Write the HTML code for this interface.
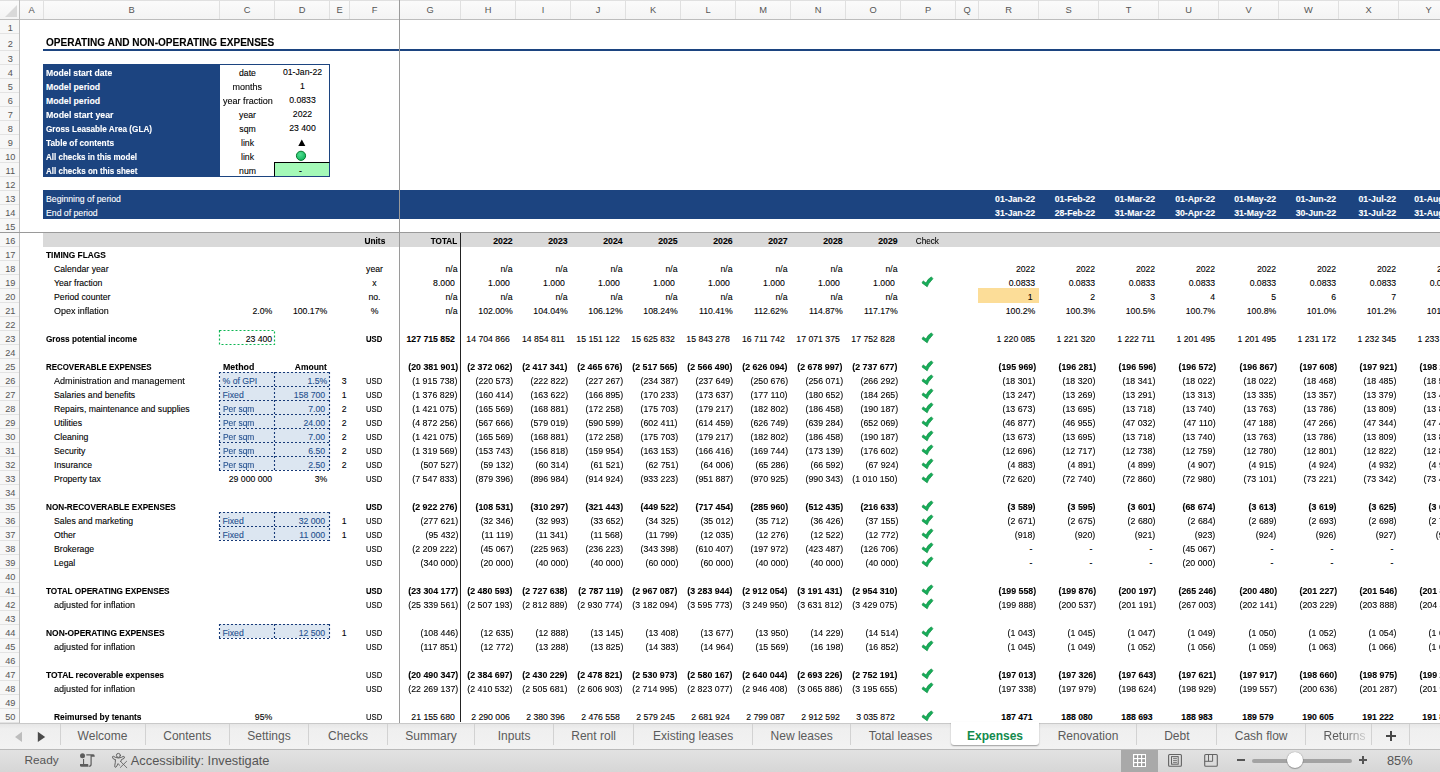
<!DOCTYPE html>
<html><head><meta charset="utf-8"><style>
html,body{margin:0;padding:0;width:1440px;height:772px;overflow:hidden;background:#fff;}
body{position:relative;font-family:"Liberation Sans",sans-serif;}
.c{position:absolute;height:14px;line-height:14px;font-size:8.7px;white-space:nowrap;color:#000;-webkit-text-stroke:0.1px currentColor;}
.h{position:absolute;top:1px;height:18px;line-height:18.6px;font-size:9.3px;color:#555;text-align:center;}
.rn{position:absolute;left:0;width:19px;padding-left:1.5px;box-sizing:border-box;font-size:9.2px;color:#555;text-align:center;}
.tab{position:absolute;top:723px;height:25px;line-height:26px;font-size:12px;color:#5b5b5b;text-align:center;white-space:nowrap;}
.st{position:absolute;top:749px;height:23px;line-height:23px;font-size:12.5px;color:#555;white-space:nowrap;}
</style></head><body>
<div style="position:absolute;left:43px;top:49px;width:1397px;height:2px;background:#1c4480;"></div>
<div style="position:absolute;left:43px;top:64px;width:176px;height:113px;background:#1c4480;"></div>
<div style="position:absolute;left:219px;top:64px;width:111px;height:113px;border:1px solid #1c4480;box-sizing:border-box;"></div>
<div style="position:absolute;left:274px;top:162px;width:56px;height:15px;background:#a4f9b7;border-top:1px solid #000;border-left:1px solid #000;border-right:1px solid #1c4480;border-bottom:1px solid #1c4480;box-sizing:border-box;"></div>
<div style="position:absolute;left:43px;top:190px;width:1397px;height:29px;background:#1c4480;"></div>
<div style="position:absolute;left:43px;top:233px;width:1397px;height:14px;background:#d9d9d9;"></div>
<div style="position:absolute;left:460px;top:233px;width:1px;height:489px;background:#222;"></div>
<div style="position:absolute;left:978px;top:288px;width:61px;height:15px;background:#fcdd98;"></div>
<div style="position:absolute;left:220px;top:372px;width:55px;height:14px;background:#dce6f1;"></div>
<div style="position:absolute;left:275px;top:372px;width:55px;height:14px;background:#dce6f1;"></div>
<div style="position:absolute;left:220px;top:386px;width:55px;height:14px;background:#dce6f1;"></div>
<div style="position:absolute;left:275px;top:386px;width:55px;height:14px;background:#dce6f1;"></div>
<div style="position:absolute;left:220px;top:400px;width:55px;height:14px;background:#dce6f1;"></div>
<div style="position:absolute;left:275px;top:400px;width:55px;height:14px;background:#dce6f1;"></div>
<div style="position:absolute;left:220px;top:414px;width:55px;height:14px;background:#dce6f1;"></div>
<div style="position:absolute;left:275px;top:414px;width:55px;height:14px;background:#dce6f1;"></div>
<div style="position:absolute;left:220px;top:428px;width:55px;height:14px;background:#dce6f1;"></div>
<div style="position:absolute;left:275px;top:428px;width:55px;height:14px;background:#dce6f1;"></div>
<div style="position:absolute;left:220px;top:442px;width:55px;height:14px;background:#dce6f1;"></div>
<div style="position:absolute;left:275px;top:442px;width:55px;height:14px;background:#dce6f1;"></div>
<div style="position:absolute;left:220px;top:456px;width:55px;height:14px;background:#dce6f1;"></div>
<div style="position:absolute;left:275px;top:456px;width:55px;height:14px;background:#dce6f1;"></div>
<div style="position:absolute;left:220px;top:512px;width:55px;height:14px;background:#dce6f1;"></div>
<div style="position:absolute;left:275px;top:512px;width:55px;height:14px;background:#dce6f1;"></div>
<div style="position:absolute;left:220px;top:526px;width:55px;height:14px;background:#dce6f1;"></div>
<div style="position:absolute;left:275px;top:526px;width:55px;height:14px;background:#dce6f1;"></div>
<div style="position:absolute;left:220px;top:624px;width:55px;height:14px;background:#dce6f1;"></div>
<div style="position:absolute;left:275px;top:624px;width:55px;height:14px;background:#dce6f1;"></div>
<svg style="position:absolute;left:0;top:0" width="1440" height="772"><rect x="219.5" y="330.5" width="55" height="14" fill="none" stroke="#0cb652" stroke-width="1.2" stroke-dasharray="2,2"/></svg>
<div class="c" style="left:43px;top:35.6px;width:177px;text-align:left;padding-left:3px;box-sizing:border-box;font-weight:bold;font-size:10px;"><span style="display:inline-block;transform:scaleX(1.008);transform-origin:left;">OPERATING AND NON-OPERATING EXPENSES</span></div>
<div class="c" style="left:43px;top:65.6px;width:177px;text-align:left;padding-left:3px;box-sizing:border-box;font-weight:bold;color:#fff;"><span style="display:inline-block;transform:scaleX(0.994);transform-origin:left;">Model start date</span></div>
<div class="c" style="left:220px;top:65.6px;width:55px;text-align:center;">date</div>
<div class="c" style="left:275px;top:64.6px;width:55px;text-align:center;">01-Jan-22</div>
<div class="c" style="left:43px;top:79.6px;width:177px;text-align:left;padding-left:3px;box-sizing:border-box;font-weight:bold;color:#fff;">Model period</div>
<div class="c" style="left:220px;top:79.6px;width:55px;text-align:center;"><span style="display:inline-block;transform:scaleX(1.035);transform-origin:center;">months</span></div>
<div class="c" style="left:275px;top:78.6px;width:55px;text-align:center;">1</div>
<div class="c" style="left:43px;top:93.6px;width:177px;text-align:left;padding-left:3px;box-sizing:border-box;font-weight:bold;color:#fff;">Model period</div>
<div class="c" style="left:220px;top:93.6px;width:55px;text-align:center;"><span style="display:inline-block;transform:scaleX(1.042);transform-origin:center;">year fraction</span></div>
<div class="c" style="left:275px;top:92.6px;width:55px;text-align:center;">0.0833</div>
<div class="c" style="left:43px;top:107.6px;width:177px;text-align:left;padding-left:3px;box-sizing:border-box;font-weight:bold;color:#fff;"><span style="display:inline-block;transform:scaleX(1.013);transform-origin:left;">Model start year</span></div>
<div class="c" style="left:220px;top:107.6px;width:55px;text-align:center;">year</div>
<div class="c" style="left:275px;top:106.6px;width:55px;text-align:center;">2022</div>
<div class="c" style="left:43px;top:121.6px;width:177px;text-align:left;padding-left:3px;box-sizing:border-box;font-weight:bold;color:#fff;"><span style="display:inline-block;transform:scaleX(0.941);transform-origin:left;">Gross Leasable Area (GLA)</span></div>
<div class="c" style="left:220px;top:121.6px;width:55px;text-align:center;">sqm</div>
<div class="c" style="left:275px;top:120.6px;width:55px;text-align:center;">23 400</div>
<div class="c" style="left:43px;top:135.6px;width:177px;text-align:left;padding-left:3px;box-sizing:border-box;font-weight:bold;color:#fff;"><span style="display:inline-block;transform:scaleX(0.955);transform-origin:left;">Table of contents</span></div>
<div class="c" style="left:220px;top:135.6px;width:55px;text-align:center;">link</div>
<div class="c" style="left:43px;top:149.6px;width:177px;text-align:left;padding-left:3px;box-sizing:border-box;font-weight:bold;color:#fff;"><span style="display:inline-block;transform:scaleX(0.92);transform-origin:left;">All checks in this model</span></div>
<div class="c" style="left:220px;top:149.6px;width:55px;text-align:center;">link</div>
<div class="c" style="left:43px;top:163.6px;width:177px;text-align:left;padding-left:3px;box-sizing:border-box;font-weight:bold;color:#fff;"><span style="display:inline-block;transform:scaleX(0.924);transform-origin:left;">All checks on this sheet</span></div>
<div class="c" style="left:220px;top:163.6px;width:55px;text-align:center;">num</div>
<div class="c" style="left:275px;top:164.1px;width:55px;text-align:center;margin-left:-2px;">-</div>
<svg style="position:absolute;left:0;top:0" width="1440" height="772"><polygon points="301.8,139.4 298.3,146 305.3,146" fill="#000"/><defs><radialGradient id="gc" cx="0.4" cy="0.35" r="0.7"><stop offset="0" stop-color="#52de90"/><stop offset="1" stop-color="#0db45c"/></radialGradient></defs><circle cx="301" cy="155.8" r="4.6" fill="url(#gc)" stroke="#077a2e" stroke-width="1"/></svg>
<div class="c" style="left:43px;top:191.6px;width:177px;text-align:left;padding-left:3px;box-sizing:border-box;color:#fff;">Beginning of period</div>
<div class="c" style="left:43px;top:205.6px;width:177px;text-align:left;padding-left:3px;box-sizing:border-box;color:#fff;">End of period</div>
<div class="c" style="left:978px;top:191.6px;width:60px;text-align:right;padding-right:2.8px;box-sizing:border-box;font-weight:bold;color:#fff;">01-Jan-22</div>
<div class="c" style="left:978px;top:205.6px;width:60px;text-align:right;padding-right:2.8px;box-sizing:border-box;font-weight:bold;color:#fff;">31-Jan-22</div>
<div class="c" style="left:1038px;top:191.6px;width:60px;text-align:right;padding-right:2.8px;box-sizing:border-box;font-weight:bold;color:#fff;">01-Feb-22</div>
<div class="c" style="left:1038px;top:205.6px;width:60px;text-align:right;padding-right:2.8px;box-sizing:border-box;font-weight:bold;color:#fff;">28-Feb-22</div>
<div class="c" style="left:1098px;top:191.6px;width:60px;text-align:right;padding-right:2.8px;box-sizing:border-box;font-weight:bold;color:#fff;">01-Mar-22</div>
<div class="c" style="left:1098px;top:205.6px;width:60px;text-align:right;padding-right:2.8px;box-sizing:border-box;font-weight:bold;color:#fff;">31-Mar-22</div>
<div class="c" style="left:1158px;top:191.6px;width:60px;text-align:right;padding-right:2.8px;box-sizing:border-box;font-weight:bold;color:#fff;">01-Apr-22</div>
<div class="c" style="left:1158px;top:205.6px;width:60px;text-align:right;padding-right:2.8px;box-sizing:border-box;font-weight:bold;color:#fff;">30-Apr-22</div>
<div class="c" style="left:1218px;top:191.6px;width:61px;text-align:right;padding-right:2.8px;box-sizing:border-box;font-weight:bold;color:#fff;">01-May-22</div>
<div class="c" style="left:1218px;top:205.6px;width:61px;text-align:right;padding-right:2.8px;box-sizing:border-box;font-weight:bold;color:#fff;">31-May-22</div>
<div class="c" style="left:1279px;top:191.6px;width:60px;text-align:right;padding-right:2.8px;box-sizing:border-box;font-weight:bold;color:#fff;">01-Jun-22</div>
<div class="c" style="left:1279px;top:205.6px;width:60px;text-align:right;padding-right:2.8px;box-sizing:border-box;font-weight:bold;color:#fff;">30-Jun-22</div>
<div class="c" style="left:1339px;top:191.6px;width:60px;text-align:right;padding-right:2.8px;box-sizing:border-box;font-weight:bold;color:#fff;">01-Jul-22</div>
<div class="c" style="left:1339px;top:205.6px;width:60px;text-align:right;padding-right:2.8px;box-sizing:border-box;font-weight:bold;color:#fff;">31-Jul-22</div>
<div class="c" style="left:1399px;top:191.6px;width:60px;text-align:right;padding-right:2.8px;box-sizing:border-box;font-weight:bold;color:#fff;">01-Aug-22</div>
<div class="c" style="left:1399px;top:205.6px;width:60px;text-align:right;padding-right:2.8px;box-sizing:border-box;font-weight:bold;color:#fff;">31-Aug-22</div>
<div class="c" style="left:349px;top:233.6px;width:50px;text-align:center;padding-left:1px;box-sizing:border-box;font-weight:bold;"><span style="display:inline-block;transform:scaleX(0.958);transform-origin:center;">Units</span></div>
<div class="c" style="left:399px;top:233.6px;width:61px;text-align:right;padding-right:2.4px;box-sizing:border-box;font-weight:bold;"><span style="display:inline-block;transform:scaleX(0.938);transform-origin:right;">TOTAL</span></div>
<div class="c" style="left:460px;top:233.6px;width:55px;text-align:right;padding-right:2.4px;box-sizing:border-box;font-weight:bold;">2022</div>
<div class="c" style="left:515px;top:233.6px;width:55px;text-align:right;padding-right:2.4px;box-sizing:border-box;font-weight:bold;">2023</div>
<div class="c" style="left:570px;top:233.6px;width:55px;text-align:right;padding-right:2.4px;box-sizing:border-box;font-weight:bold;">2024</div>
<div class="c" style="left:625px;top:233.6px;width:55px;text-align:right;padding-right:2.4px;box-sizing:border-box;font-weight:bold;">2025</div>
<div class="c" style="left:680px;top:233.6px;width:55px;text-align:right;padding-right:2.4px;box-sizing:border-box;font-weight:bold;">2026</div>
<div class="c" style="left:735px;top:233.6px;width:55px;text-align:right;padding-right:2.4px;box-sizing:border-box;font-weight:bold;">2027</div>
<div class="c" style="left:790px;top:233.6px;width:55px;text-align:right;padding-right:2.4px;box-sizing:border-box;font-weight:bold;">2028</div>
<div class="c" style="left:845px;top:233.6px;width:55px;text-align:right;padding-right:2.4px;box-sizing:border-box;font-weight:bold;">2029</div>
<div class="c" style="left:900px;top:233.6px;width:55px;text-align:center;"><span style="display:inline-block;transform:scaleX(0.938);transform-origin:center;">Check</span></div>
<div class="c" style="left:43px;top:247.6px;width:177px;text-align:left;padding-left:3px;box-sizing:border-box;font-weight:bold;"><span style="display:inline-block;transform:scaleX(0.962);transform-origin:left;">TIMING FLAGS</span></div>
<div class="c" style="left:43px;top:261.6px;width:177px;text-align:left;padding-left:11px;box-sizing:border-box;">Calendar year</div>
<div class="c" style="left:349px;top:261.6px;width:50px;text-align:center;padding-left:1px;box-sizing:border-box;">year</div>
<div class="c" style="left:43px;top:275.6px;width:177px;text-align:left;padding-left:11px;box-sizing:border-box;">Year fraction</div>
<div class="c" style="left:349px;top:275.6px;width:50px;text-align:center;padding-left:1px;box-sizing:border-box;">x</div>
<div class="c" style="left:43px;top:289.6px;width:177px;text-align:left;padding-left:11px;box-sizing:border-box;">Period counter</div>
<div class="c" style="left:349px;top:289.6px;width:50px;text-align:center;padding-left:1px;box-sizing:border-box;">no.</div>
<div class="c" style="left:43px;top:303.6px;width:177px;text-align:left;padding-left:11px;box-sizing:border-box;"><span style="display:inline-block;transform:scaleX(1.03);transform-origin:left;">Opex inflation</span></div>
<div class="c" style="left:349px;top:303.6px;width:50px;text-align:center;padding-left:1px;box-sizing:border-box;">%</div>
<div class="c" style="left:220px;top:303.6px;width:55px;text-align:right;padding-right:2.8px;box-sizing:border-box;">2.0%</div>
<div class="c" style="left:275px;top:303.6px;width:55px;text-align:right;padding-right:2.8px;box-sizing:border-box;">100.17%</div>
<div class="c" style="left:399px;top:261.6px;width:61px;text-align:right;padding-right:2.4px;box-sizing:border-box;">n/a</div>
<div class="c" style="left:399px;top:275.6px;width:61px;text-align:right;padding-right:5.2px;box-sizing:border-box;">8.000</div>
<div class="c" style="left:399px;top:289.6px;width:61px;text-align:right;padding-right:2.4px;box-sizing:border-box;">n/a</div>
<div class="c" style="left:399px;top:303.6px;width:61px;text-align:right;padding-right:2.4px;box-sizing:border-box;">n/a</div>
<div class="c" style="left:460px;top:261.6px;width:55px;text-align:right;padding-right:2.4px;box-sizing:border-box;">n/a</div>
<div class="c" style="left:460px;top:275.6px;width:55px;text-align:right;padding-right:5.2px;box-sizing:border-box;">1.000</div>
<div class="c" style="left:460px;top:289.6px;width:55px;text-align:right;padding-right:2.4px;box-sizing:border-box;">n/a</div>
<div class="c" style="left:460px;top:303.6px;width:55px;text-align:right;padding-right:2.4px;box-sizing:border-box;">102.00%</div>
<div class="c" style="left:515px;top:261.6px;width:55px;text-align:right;padding-right:2.4px;box-sizing:border-box;">n/a</div>
<div class="c" style="left:515px;top:275.6px;width:55px;text-align:right;padding-right:5.2px;box-sizing:border-box;">1.000</div>
<div class="c" style="left:515px;top:289.6px;width:55px;text-align:right;padding-right:2.4px;box-sizing:border-box;">n/a</div>
<div class="c" style="left:515px;top:303.6px;width:55px;text-align:right;padding-right:2.4px;box-sizing:border-box;">104.04%</div>
<div class="c" style="left:570px;top:261.6px;width:55px;text-align:right;padding-right:2.4px;box-sizing:border-box;">n/a</div>
<div class="c" style="left:570px;top:275.6px;width:55px;text-align:right;padding-right:5.2px;box-sizing:border-box;">1.000</div>
<div class="c" style="left:570px;top:289.6px;width:55px;text-align:right;padding-right:2.4px;box-sizing:border-box;">n/a</div>
<div class="c" style="left:570px;top:303.6px;width:55px;text-align:right;padding-right:2.4px;box-sizing:border-box;">106.12%</div>
<div class="c" style="left:625px;top:261.6px;width:55px;text-align:right;padding-right:2.4px;box-sizing:border-box;">n/a</div>
<div class="c" style="left:625px;top:275.6px;width:55px;text-align:right;padding-right:5.2px;box-sizing:border-box;">1.000</div>
<div class="c" style="left:625px;top:289.6px;width:55px;text-align:right;padding-right:2.4px;box-sizing:border-box;">n/a</div>
<div class="c" style="left:625px;top:303.6px;width:55px;text-align:right;padding-right:2.4px;box-sizing:border-box;">108.24%</div>
<div class="c" style="left:680px;top:261.6px;width:55px;text-align:right;padding-right:2.4px;box-sizing:border-box;">n/a</div>
<div class="c" style="left:680px;top:275.6px;width:55px;text-align:right;padding-right:5.2px;box-sizing:border-box;">1.000</div>
<div class="c" style="left:680px;top:289.6px;width:55px;text-align:right;padding-right:2.4px;box-sizing:border-box;">n/a</div>
<div class="c" style="left:680px;top:303.6px;width:55px;text-align:right;padding-right:2.4px;box-sizing:border-box;">110.41%</div>
<div class="c" style="left:735px;top:261.6px;width:55px;text-align:right;padding-right:2.4px;box-sizing:border-box;">n/a</div>
<div class="c" style="left:735px;top:275.6px;width:55px;text-align:right;padding-right:5.2px;box-sizing:border-box;">1.000</div>
<div class="c" style="left:735px;top:289.6px;width:55px;text-align:right;padding-right:2.4px;box-sizing:border-box;">n/a</div>
<div class="c" style="left:735px;top:303.6px;width:55px;text-align:right;padding-right:2.4px;box-sizing:border-box;">112.62%</div>
<div class="c" style="left:790px;top:261.6px;width:55px;text-align:right;padding-right:2.4px;box-sizing:border-box;">n/a</div>
<div class="c" style="left:790px;top:275.6px;width:55px;text-align:right;padding-right:5.2px;box-sizing:border-box;">1.000</div>
<div class="c" style="left:790px;top:289.6px;width:55px;text-align:right;padding-right:2.4px;box-sizing:border-box;">n/a</div>
<div class="c" style="left:790px;top:303.6px;width:55px;text-align:right;padding-right:2.4px;box-sizing:border-box;">114.87%</div>
<div class="c" style="left:845px;top:261.6px;width:55px;text-align:right;padding-right:2.4px;box-sizing:border-box;">n/a</div>
<div class="c" style="left:845px;top:275.6px;width:55px;text-align:right;padding-right:5.2px;box-sizing:border-box;">1.000</div>
<div class="c" style="left:845px;top:289.6px;width:55px;text-align:right;padding-right:2.4px;box-sizing:border-box;">n/a</div>
<div class="c" style="left:845px;top:303.6px;width:55px;text-align:right;padding-right:2.4px;box-sizing:border-box;">117.17%</div>
<div class="c" style="left:978px;top:261.6px;width:60px;text-align:right;padding-right:2.8px;box-sizing:border-box;">2022</div>
<div class="c" style="left:978px;top:275.6px;width:60px;text-align:right;padding-right:2.8px;box-sizing:border-box;">0.0833</div>
<div class="c" style="left:978px;top:289.6px;width:60px;text-align:right;padding-right:5.3px;box-sizing:border-box;">1</div>
<div class="c" style="left:978px;top:303.6px;width:60px;text-align:right;padding-right:2.8px;box-sizing:border-box;">100.2%</div>
<div class="c" style="left:1038px;top:261.6px;width:60px;text-align:right;padding-right:2.8px;box-sizing:border-box;">2022</div>
<div class="c" style="left:1038px;top:275.6px;width:60px;text-align:right;padding-right:2.8px;box-sizing:border-box;">0.0833</div>
<div class="c" style="left:1038px;top:289.6px;width:60px;text-align:right;padding-right:2.8px;box-sizing:border-box;">2</div>
<div class="c" style="left:1038px;top:303.6px;width:60px;text-align:right;padding-right:2.8px;box-sizing:border-box;">100.3%</div>
<div class="c" style="left:1098px;top:261.6px;width:60px;text-align:right;padding-right:2.8px;box-sizing:border-box;">2022</div>
<div class="c" style="left:1098px;top:275.6px;width:60px;text-align:right;padding-right:2.8px;box-sizing:border-box;">0.0833</div>
<div class="c" style="left:1098px;top:289.6px;width:60px;text-align:right;padding-right:2.8px;box-sizing:border-box;">3</div>
<div class="c" style="left:1098px;top:303.6px;width:60px;text-align:right;padding-right:2.8px;box-sizing:border-box;">100.5%</div>
<div class="c" style="left:1158px;top:261.6px;width:60px;text-align:right;padding-right:2.8px;box-sizing:border-box;">2022</div>
<div class="c" style="left:1158px;top:275.6px;width:60px;text-align:right;padding-right:2.8px;box-sizing:border-box;">0.0833</div>
<div class="c" style="left:1158px;top:289.6px;width:60px;text-align:right;padding-right:2.8px;box-sizing:border-box;">4</div>
<div class="c" style="left:1158px;top:303.6px;width:60px;text-align:right;padding-right:2.8px;box-sizing:border-box;">100.7%</div>
<div class="c" style="left:1218px;top:261.6px;width:61px;text-align:right;padding-right:2.8px;box-sizing:border-box;">2022</div>
<div class="c" style="left:1218px;top:275.6px;width:61px;text-align:right;padding-right:2.8px;box-sizing:border-box;">0.0833</div>
<div class="c" style="left:1218px;top:289.6px;width:61px;text-align:right;padding-right:2.8px;box-sizing:border-box;">5</div>
<div class="c" style="left:1218px;top:303.6px;width:61px;text-align:right;padding-right:2.8px;box-sizing:border-box;">100.8%</div>
<div class="c" style="left:1279px;top:261.6px;width:60px;text-align:right;padding-right:2.8px;box-sizing:border-box;">2022</div>
<div class="c" style="left:1279px;top:275.6px;width:60px;text-align:right;padding-right:2.8px;box-sizing:border-box;">0.0833</div>
<div class="c" style="left:1279px;top:289.6px;width:60px;text-align:right;padding-right:2.8px;box-sizing:border-box;">6</div>
<div class="c" style="left:1279px;top:303.6px;width:60px;text-align:right;padding-right:2.8px;box-sizing:border-box;">101.0%</div>
<div class="c" style="left:1339px;top:261.6px;width:60px;text-align:right;padding-right:2.8px;box-sizing:border-box;">2022</div>
<div class="c" style="left:1339px;top:275.6px;width:60px;text-align:right;padding-right:2.8px;box-sizing:border-box;">0.0833</div>
<div class="c" style="left:1339px;top:289.6px;width:60px;text-align:right;padding-right:2.8px;box-sizing:border-box;">7</div>
<div class="c" style="left:1339px;top:303.6px;width:60px;text-align:right;padding-right:2.8px;box-sizing:border-box;">101.2%</div>
<div class="c" style="left:1399px;top:261.6px;width:60px;text-align:right;padding-right:2.8px;box-sizing:border-box;">2022</div>
<div class="c" style="left:1399px;top:275.6px;width:60px;text-align:right;padding-right:2.8px;box-sizing:border-box;">0.0833</div>
<div class="c" style="left:1399px;top:289.6px;width:60px;text-align:right;padding-right:2.8px;box-sizing:border-box;">8</div>
<div class="c" style="left:1399px;top:303.6px;width:60px;text-align:right;padding-right:2.8px;box-sizing:border-box;">101.3%</div>
<div class="c" style="left:43px;top:331.6px;width:177px;text-align:left;padding-left:3px;box-sizing:border-box;font-weight:bold;"><span style="display:inline-block;transform:scaleX(0.942);transform-origin:left;">Gross potential income</span></div>
<div class="c" style="left:220px;top:331.6px;width:55px;text-align:right;padding-right:2.8px;box-sizing:border-box;">23 400</div>
<div class="c" style="left:349px;top:331.6px;width:50px;text-align:center;padding-left:1px;box-sizing:border-box;font-weight:bold;"><span style="display:inline-block;transform:scaleX(0.885);transform-origin:center;">USD</span></div>
<div class="c" style="left:399px;top:331.6px;width:61px;text-align:right;padding-right:5.2px;box-sizing:border-box;font-weight:bold;">127 715 852</div>
<div class="c" style="left:460px;top:331.6px;width:55px;text-align:right;padding-right:5.2px;box-sizing:border-box;">14 704 866</div>
<div class="c" style="left:515px;top:331.6px;width:55px;text-align:right;padding-right:5.2px;box-sizing:border-box;">14 854 811</div>
<div class="c" style="left:570px;top:331.6px;width:55px;text-align:right;padding-right:5.2px;box-sizing:border-box;">15 151 122</div>
<div class="c" style="left:625px;top:331.6px;width:55px;text-align:right;padding-right:5.2px;box-sizing:border-box;">15 625 832</div>
<div class="c" style="left:680px;top:331.6px;width:55px;text-align:right;padding-right:5.2px;box-sizing:border-box;">15 843 278</div>
<div class="c" style="left:735px;top:331.6px;width:55px;text-align:right;padding-right:5.2px;box-sizing:border-box;">16 711 742</div>
<div class="c" style="left:790px;top:331.6px;width:55px;text-align:right;padding-right:5.2px;box-sizing:border-box;">17 071 375</div>
<div class="c" style="left:845px;top:331.6px;width:55px;text-align:right;padding-right:5.2px;box-sizing:border-box;">17 752 828</div>
<div class="c" style="left:978px;top:331.6px;width:60px;text-align:right;padding-right:2.8px;box-sizing:border-box;">1 220 085</div>
<div class="c" style="left:1038px;top:331.6px;width:60px;text-align:right;padding-right:2.8px;box-sizing:border-box;">1 221 320</div>
<div class="c" style="left:1098px;top:331.6px;width:60px;text-align:right;padding-right:2.8px;box-sizing:border-box;">1 222 711</div>
<div class="c" style="left:1158px;top:331.6px;width:60px;text-align:right;padding-right:2.8px;box-sizing:border-box;">1 201 495</div>
<div class="c" style="left:1218px;top:331.6px;width:61px;text-align:right;padding-right:2.8px;box-sizing:border-box;">1 201 495</div>
<div class="c" style="left:1279px;top:331.6px;width:60px;text-align:right;padding-right:2.8px;box-sizing:border-box;">1 231 172</div>
<div class="c" style="left:1339px;top:331.6px;width:60px;text-align:right;padding-right:2.8px;box-sizing:border-box;">1 232 345</div>
<div class="c" style="left:1399px;top:331.6px;width:60px;text-align:right;padding-right:2.8px;box-sizing:border-box;">1 233 518</div>
<div class="c" style="left:43px;top:359.6px;width:177px;text-align:left;padding-left:3px;box-sizing:border-box;font-weight:bold;"><span style="display:inline-block;transform:scaleX(0.911);transform-origin:left;">RECOVERABLE EXPENSES</span></div>
<div class="c" style="left:220px;top:359.6px;width:55px;text-align:left;padding-left:2.5px;box-sizing:border-box;font-weight:bold;"><span style="display:inline-block;transform:scaleX(1.016);transform-origin:left;">Method</span></div>
<div class="c" style="left:275px;top:359.6px;width:55px;text-align:right;padding-right:2.8px;box-sizing:border-box;font-weight:bold;"><span style="display:inline-block;transform:scaleX(0.975);transform-origin:right;">Amount</span></div>
<div class="c" style="left:399px;top:359.6px;width:61px;text-align:right;padding-right:2.1px;box-sizing:border-box;font-weight:bold;"><span style="display:inline-block;transform:scaleX(1.015);transform-origin:right;">(20 381 901)</span></div>
<div class="c" style="left:460px;top:359.6px;width:55px;text-align:right;padding-right:2.1px;box-sizing:border-box;font-weight:bold;"><span style="display:inline-block;transform:scaleX(1.015);transform-origin:right;">(2 372 062)</span></div>
<div class="c" style="left:515px;top:359.6px;width:55px;text-align:right;padding-right:2.1px;box-sizing:border-box;font-weight:bold;"><span style="display:inline-block;transform:scaleX(1.015);transform-origin:right;">(2 417 341)</span></div>
<div class="c" style="left:570px;top:359.6px;width:55px;text-align:right;padding-right:2.1px;box-sizing:border-box;font-weight:bold;"><span style="display:inline-block;transform:scaleX(1.015);transform-origin:right;">(2 465 676)</span></div>
<div class="c" style="left:625px;top:359.6px;width:55px;text-align:right;padding-right:2.1px;box-sizing:border-box;font-weight:bold;"><span style="display:inline-block;transform:scaleX(1.015);transform-origin:right;">(2 517 565)</span></div>
<div class="c" style="left:680px;top:359.6px;width:55px;text-align:right;padding-right:2.1px;box-sizing:border-box;font-weight:bold;"><span style="display:inline-block;transform:scaleX(1.015);transform-origin:right;">(2 566 490)</span></div>
<div class="c" style="left:735px;top:359.6px;width:55px;text-align:right;padding-right:2.1px;box-sizing:border-box;font-weight:bold;"><span style="display:inline-block;transform:scaleX(1.015);transform-origin:right;">(2 626 094)</span></div>
<div class="c" style="left:790px;top:359.6px;width:55px;text-align:right;padding-right:2.1px;box-sizing:border-box;font-weight:bold;"><span style="display:inline-block;transform:scaleX(1.015);transform-origin:right;">(2 678 997)</span></div>
<div class="c" style="left:845px;top:359.6px;width:55px;text-align:right;padding-right:2.1px;box-sizing:border-box;font-weight:bold;"><span style="display:inline-block;transform:scaleX(1.015);transform-origin:right;">(2 737 677)</span></div>
<div class="c" style="left:978px;top:359.6px;width:60px;text-align:right;padding-right:2.3px;box-sizing:border-box;font-weight:bold;"><span style="display:inline-block;transform:scaleX(1.015);transform-origin:right;">(195 969)</span></div>
<div class="c" style="left:1038px;top:359.6px;width:60px;text-align:right;padding-right:2.3px;box-sizing:border-box;font-weight:bold;"><span style="display:inline-block;transform:scaleX(1.015);transform-origin:right;">(196 281)</span></div>
<div class="c" style="left:1098px;top:359.6px;width:60px;text-align:right;padding-right:2.3px;box-sizing:border-box;font-weight:bold;"><span style="display:inline-block;transform:scaleX(1.015);transform-origin:right;">(196 596)</span></div>
<div class="c" style="left:1158px;top:359.6px;width:60px;text-align:right;padding-right:2.3px;box-sizing:border-box;font-weight:bold;"><span style="display:inline-block;transform:scaleX(1.015);transform-origin:right;">(196 572)</span></div>
<div class="c" style="left:1218px;top:359.6px;width:61px;text-align:right;padding-right:2.3px;box-sizing:border-box;font-weight:bold;"><span style="display:inline-block;transform:scaleX(1.015);transform-origin:right;">(196 867)</span></div>
<div class="c" style="left:1279px;top:359.6px;width:60px;text-align:right;padding-right:2.3px;box-sizing:border-box;font-weight:bold;"><span style="display:inline-block;transform:scaleX(1.015);transform-origin:right;">(197 608)</span></div>
<div class="c" style="left:1339px;top:359.6px;width:60px;text-align:right;padding-right:2.3px;box-sizing:border-box;font-weight:bold;"><span style="display:inline-block;transform:scaleX(1.015);transform-origin:right;">(197 921)</span></div>
<div class="c" style="left:1399px;top:359.6px;width:60px;text-align:right;padding-right:2.3px;box-sizing:border-box;font-weight:bold;"><span style="display:inline-block;transform:scaleX(1.015);transform-origin:right;">(198 237)</span></div>
<div class="c" style="left:43px;top:373.6px;width:177px;text-align:left;padding-left:11px;box-sizing:border-box;"><span style="display:inline-block;transform:scaleX(1.045);transform-origin:left;">Administration and management</span></div>
<div class="c" style="left:330px;top:373.6px;width:19px;text-align:right;padding-right:2.4px;box-sizing:border-box;">3</div>
<div class="c" style="left:349px;top:373.6px;width:50px;text-align:center;padding-left:1px;box-sizing:border-box;"><span style="display:inline-block;transform:scaleX(0.885);transform-origin:center;">USD</span></div>
<div class="c" style="left:399px;top:373.6px;width:61px;text-align:right;padding-right:2.1px;box-sizing:border-box;"><span style="display:inline-block;transform:scaleX(1.015);transform-origin:right;">(1 915 738)</span></div>
<div class="c" style="left:460px;top:373.6px;width:55px;text-align:right;padding-right:2.1px;box-sizing:border-box;"><span style="display:inline-block;transform:scaleX(1.015);transform-origin:right;">(220 573)</span></div>
<div class="c" style="left:515px;top:373.6px;width:55px;text-align:right;padding-right:2.1px;box-sizing:border-box;"><span style="display:inline-block;transform:scaleX(1.015);transform-origin:right;">(222 822)</span></div>
<div class="c" style="left:570px;top:373.6px;width:55px;text-align:right;padding-right:2.1px;box-sizing:border-box;"><span style="display:inline-block;transform:scaleX(1.015);transform-origin:right;">(227 267)</span></div>
<div class="c" style="left:625px;top:373.6px;width:55px;text-align:right;padding-right:2.1px;box-sizing:border-box;"><span style="display:inline-block;transform:scaleX(1.015);transform-origin:right;">(234 387)</span></div>
<div class="c" style="left:680px;top:373.6px;width:55px;text-align:right;padding-right:2.1px;box-sizing:border-box;"><span style="display:inline-block;transform:scaleX(1.015);transform-origin:right;">(237 649)</span></div>
<div class="c" style="left:735px;top:373.6px;width:55px;text-align:right;padding-right:2.1px;box-sizing:border-box;"><span style="display:inline-block;transform:scaleX(1.015);transform-origin:right;">(250 676)</span></div>
<div class="c" style="left:790px;top:373.6px;width:55px;text-align:right;padding-right:2.1px;box-sizing:border-box;"><span style="display:inline-block;transform:scaleX(1.015);transform-origin:right;">(256 071)</span></div>
<div class="c" style="left:845px;top:373.6px;width:55px;text-align:right;padding-right:2.1px;box-sizing:border-box;"><span style="display:inline-block;transform:scaleX(1.015);transform-origin:right;">(266 292)</span></div>
<div class="c" style="left:978px;top:373.6px;width:60px;text-align:right;padding-right:2.3px;box-sizing:border-box;"><span style="display:inline-block;transform:scaleX(1.015);transform-origin:right;">(18 301)</span></div>
<div class="c" style="left:1038px;top:373.6px;width:60px;text-align:right;padding-right:2.3px;box-sizing:border-box;"><span style="display:inline-block;transform:scaleX(1.015);transform-origin:right;">(18 320)</span></div>
<div class="c" style="left:1098px;top:373.6px;width:60px;text-align:right;padding-right:2.3px;box-sizing:border-box;"><span style="display:inline-block;transform:scaleX(1.015);transform-origin:right;">(18 341)</span></div>
<div class="c" style="left:1158px;top:373.6px;width:60px;text-align:right;padding-right:2.3px;box-sizing:border-box;"><span style="display:inline-block;transform:scaleX(1.015);transform-origin:right;">(18 022)</span></div>
<div class="c" style="left:1218px;top:373.6px;width:61px;text-align:right;padding-right:2.3px;box-sizing:border-box;"><span style="display:inline-block;transform:scaleX(1.015);transform-origin:right;">(18 022)</span></div>
<div class="c" style="left:1279px;top:373.6px;width:60px;text-align:right;padding-right:2.3px;box-sizing:border-box;"><span style="display:inline-block;transform:scaleX(1.015);transform-origin:right;">(18 468)</span></div>
<div class="c" style="left:1339px;top:373.6px;width:60px;text-align:right;padding-right:2.3px;box-sizing:border-box;"><span style="display:inline-block;transform:scaleX(1.015);transform-origin:right;">(18 485)</span></div>
<div class="c" style="left:1399px;top:373.6px;width:60px;text-align:right;padding-right:2.3px;box-sizing:border-box;"><span style="display:inline-block;transform:scaleX(1.015);transform-origin:right;">(18 502)</span></div>
<div class="c" style="left:43px;top:387.6px;width:177px;text-align:left;padding-left:11px;box-sizing:border-box;">Salaries and benefits</div>
<div class="c" style="left:330px;top:387.6px;width:19px;text-align:right;padding-right:2.4px;box-sizing:border-box;">1</div>
<div class="c" style="left:349px;top:387.6px;width:50px;text-align:center;padding-left:1px;box-sizing:border-box;"><span style="display:inline-block;transform:scaleX(0.885);transform-origin:center;">USD</span></div>
<div class="c" style="left:399px;top:387.6px;width:61px;text-align:right;padding-right:2.1px;box-sizing:border-box;"><span style="display:inline-block;transform:scaleX(1.015);transform-origin:right;">(1 376 829)</span></div>
<div class="c" style="left:460px;top:387.6px;width:55px;text-align:right;padding-right:2.1px;box-sizing:border-box;"><span style="display:inline-block;transform:scaleX(1.015);transform-origin:right;">(160 414)</span></div>
<div class="c" style="left:515px;top:387.6px;width:55px;text-align:right;padding-right:2.1px;box-sizing:border-box;"><span style="display:inline-block;transform:scaleX(1.015);transform-origin:right;">(163 622)</span></div>
<div class="c" style="left:570px;top:387.6px;width:55px;text-align:right;padding-right:2.1px;box-sizing:border-box;"><span style="display:inline-block;transform:scaleX(1.015);transform-origin:right;">(166 895)</span></div>
<div class="c" style="left:625px;top:387.6px;width:55px;text-align:right;padding-right:2.1px;box-sizing:border-box;"><span style="display:inline-block;transform:scaleX(1.015);transform-origin:right;">(170 233)</span></div>
<div class="c" style="left:680px;top:387.6px;width:55px;text-align:right;padding-right:2.1px;box-sizing:border-box;"><span style="display:inline-block;transform:scaleX(1.015);transform-origin:right;">(173 637)</span></div>
<div class="c" style="left:735px;top:387.6px;width:55px;text-align:right;padding-right:2.1px;box-sizing:border-box;"><span style="display:inline-block;transform:scaleX(1.015);transform-origin:right;">(177 110)</span></div>
<div class="c" style="left:790px;top:387.6px;width:55px;text-align:right;padding-right:2.1px;box-sizing:border-box;"><span style="display:inline-block;transform:scaleX(1.015);transform-origin:right;">(180 652)</span></div>
<div class="c" style="left:845px;top:387.6px;width:55px;text-align:right;padding-right:2.1px;box-sizing:border-box;"><span style="display:inline-block;transform:scaleX(1.015);transform-origin:right;">(184 265)</span></div>
<div class="c" style="left:978px;top:387.6px;width:60px;text-align:right;padding-right:2.3px;box-sizing:border-box;"><span style="display:inline-block;transform:scaleX(1.015);transform-origin:right;">(13 247)</span></div>
<div class="c" style="left:1038px;top:387.6px;width:60px;text-align:right;padding-right:2.3px;box-sizing:border-box;"><span style="display:inline-block;transform:scaleX(1.015);transform-origin:right;">(13 269)</span></div>
<div class="c" style="left:1098px;top:387.6px;width:60px;text-align:right;padding-right:2.3px;box-sizing:border-box;"><span style="display:inline-block;transform:scaleX(1.015);transform-origin:right;">(13 291)</span></div>
<div class="c" style="left:1158px;top:387.6px;width:60px;text-align:right;padding-right:2.3px;box-sizing:border-box;"><span style="display:inline-block;transform:scaleX(1.015);transform-origin:right;">(13 313)</span></div>
<div class="c" style="left:1218px;top:387.6px;width:61px;text-align:right;padding-right:2.3px;box-sizing:border-box;"><span style="display:inline-block;transform:scaleX(1.015);transform-origin:right;">(13 335)</span></div>
<div class="c" style="left:1279px;top:387.6px;width:60px;text-align:right;padding-right:2.3px;box-sizing:border-box;"><span style="display:inline-block;transform:scaleX(1.015);transform-origin:right;">(13 357)</span></div>
<div class="c" style="left:1339px;top:387.6px;width:60px;text-align:right;padding-right:2.3px;box-sizing:border-box;"><span style="display:inline-block;transform:scaleX(1.015);transform-origin:right;">(13 379)</span></div>
<div class="c" style="left:1399px;top:387.6px;width:60px;text-align:right;padding-right:2.3px;box-sizing:border-box;"><span style="display:inline-block;transform:scaleX(1.015);transform-origin:right;">(13 401)</span></div>
<div class="c" style="left:43px;top:401.6px;width:177px;text-align:left;padding-left:11px;box-sizing:border-box;">Repairs, maintenance and supplies</div>
<div class="c" style="left:330px;top:401.6px;width:19px;text-align:right;padding-right:2.4px;box-sizing:border-box;">2</div>
<div class="c" style="left:349px;top:401.6px;width:50px;text-align:center;padding-left:1px;box-sizing:border-box;"><span style="display:inline-block;transform:scaleX(0.885);transform-origin:center;">USD</span></div>
<div class="c" style="left:399px;top:401.6px;width:61px;text-align:right;padding-right:2.1px;box-sizing:border-box;"><span style="display:inline-block;transform:scaleX(1.015);transform-origin:right;">(1 421 075)</span></div>
<div class="c" style="left:460px;top:401.6px;width:55px;text-align:right;padding-right:2.1px;box-sizing:border-box;"><span style="display:inline-block;transform:scaleX(1.015);transform-origin:right;">(165 569)</span></div>
<div class="c" style="left:515px;top:401.6px;width:55px;text-align:right;padding-right:2.1px;box-sizing:border-box;"><span style="display:inline-block;transform:scaleX(1.015);transform-origin:right;">(168 881)</span></div>
<div class="c" style="left:570px;top:401.6px;width:55px;text-align:right;padding-right:2.1px;box-sizing:border-box;"><span style="display:inline-block;transform:scaleX(1.015);transform-origin:right;">(172 258)</span></div>
<div class="c" style="left:625px;top:401.6px;width:55px;text-align:right;padding-right:2.1px;box-sizing:border-box;"><span style="display:inline-block;transform:scaleX(1.015);transform-origin:right;">(175 703)</span></div>
<div class="c" style="left:680px;top:401.6px;width:55px;text-align:right;padding-right:2.1px;box-sizing:border-box;"><span style="display:inline-block;transform:scaleX(1.015);transform-origin:right;">(179 217)</span></div>
<div class="c" style="left:735px;top:401.6px;width:55px;text-align:right;padding-right:2.1px;box-sizing:border-box;"><span style="display:inline-block;transform:scaleX(1.015);transform-origin:right;">(182 802)</span></div>
<div class="c" style="left:790px;top:401.6px;width:55px;text-align:right;padding-right:2.1px;box-sizing:border-box;"><span style="display:inline-block;transform:scaleX(1.015);transform-origin:right;">(186 458)</span></div>
<div class="c" style="left:845px;top:401.6px;width:55px;text-align:right;padding-right:2.1px;box-sizing:border-box;"><span style="display:inline-block;transform:scaleX(1.015);transform-origin:right;">(190 187)</span></div>
<div class="c" style="left:978px;top:401.6px;width:60px;text-align:right;padding-right:2.3px;box-sizing:border-box;"><span style="display:inline-block;transform:scaleX(1.015);transform-origin:right;">(13 673)</span></div>
<div class="c" style="left:1038px;top:401.6px;width:60px;text-align:right;padding-right:2.3px;box-sizing:border-box;"><span style="display:inline-block;transform:scaleX(1.015);transform-origin:right;">(13 695)</span></div>
<div class="c" style="left:1098px;top:401.6px;width:60px;text-align:right;padding-right:2.3px;box-sizing:border-box;"><span style="display:inline-block;transform:scaleX(1.015);transform-origin:right;">(13 718)</span></div>
<div class="c" style="left:1158px;top:401.6px;width:60px;text-align:right;padding-right:2.3px;box-sizing:border-box;"><span style="display:inline-block;transform:scaleX(1.015);transform-origin:right;">(13 740)</span></div>
<div class="c" style="left:1218px;top:401.6px;width:61px;text-align:right;padding-right:2.3px;box-sizing:border-box;"><span style="display:inline-block;transform:scaleX(1.015);transform-origin:right;">(13 763)</span></div>
<div class="c" style="left:1279px;top:401.6px;width:60px;text-align:right;padding-right:2.3px;box-sizing:border-box;"><span style="display:inline-block;transform:scaleX(1.015);transform-origin:right;">(13 786)</span></div>
<div class="c" style="left:1339px;top:401.6px;width:60px;text-align:right;padding-right:2.3px;box-sizing:border-box;"><span style="display:inline-block;transform:scaleX(1.015);transform-origin:right;">(13 809)</span></div>
<div class="c" style="left:1399px;top:401.6px;width:60px;text-align:right;padding-right:2.3px;box-sizing:border-box;"><span style="display:inline-block;transform:scaleX(1.015);transform-origin:right;">(13 832)</span></div>
<div class="c" style="left:43px;top:415.6px;width:177px;text-align:left;padding-left:11px;box-sizing:border-box;">Utilities</div>
<div class="c" style="left:330px;top:415.6px;width:19px;text-align:right;padding-right:2.4px;box-sizing:border-box;">2</div>
<div class="c" style="left:349px;top:415.6px;width:50px;text-align:center;padding-left:1px;box-sizing:border-box;"><span style="display:inline-block;transform:scaleX(0.885);transform-origin:center;">USD</span></div>
<div class="c" style="left:399px;top:415.6px;width:61px;text-align:right;padding-right:2.1px;box-sizing:border-box;"><span style="display:inline-block;transform:scaleX(1.015);transform-origin:right;">(4 872 256)</span></div>
<div class="c" style="left:460px;top:415.6px;width:55px;text-align:right;padding-right:2.1px;box-sizing:border-box;"><span style="display:inline-block;transform:scaleX(1.015);transform-origin:right;">(567 666)</span></div>
<div class="c" style="left:515px;top:415.6px;width:55px;text-align:right;padding-right:2.1px;box-sizing:border-box;"><span style="display:inline-block;transform:scaleX(1.015);transform-origin:right;">(579 019)</span></div>
<div class="c" style="left:570px;top:415.6px;width:55px;text-align:right;padding-right:2.1px;box-sizing:border-box;"><span style="display:inline-block;transform:scaleX(1.015);transform-origin:right;">(590 599)</span></div>
<div class="c" style="left:625px;top:415.6px;width:55px;text-align:right;padding-right:2.1px;box-sizing:border-box;"><span style="display:inline-block;transform:scaleX(1.015);transform-origin:right;">(602 411)</span></div>
<div class="c" style="left:680px;top:415.6px;width:55px;text-align:right;padding-right:2.1px;box-sizing:border-box;"><span style="display:inline-block;transform:scaleX(1.015);transform-origin:right;">(614 459)</span></div>
<div class="c" style="left:735px;top:415.6px;width:55px;text-align:right;padding-right:2.1px;box-sizing:border-box;"><span style="display:inline-block;transform:scaleX(1.015);transform-origin:right;">(626 749)</span></div>
<div class="c" style="left:790px;top:415.6px;width:55px;text-align:right;padding-right:2.1px;box-sizing:border-box;"><span style="display:inline-block;transform:scaleX(1.015);transform-origin:right;">(639 284)</span></div>
<div class="c" style="left:845px;top:415.6px;width:55px;text-align:right;padding-right:2.1px;box-sizing:border-box;"><span style="display:inline-block;transform:scaleX(1.015);transform-origin:right;">(652 069)</span></div>
<div class="c" style="left:978px;top:415.6px;width:60px;text-align:right;padding-right:2.3px;box-sizing:border-box;"><span style="display:inline-block;transform:scaleX(1.015);transform-origin:right;">(46 877)</span></div>
<div class="c" style="left:1038px;top:415.6px;width:60px;text-align:right;padding-right:2.3px;box-sizing:border-box;"><span style="display:inline-block;transform:scaleX(1.015);transform-origin:right;">(46 955)</span></div>
<div class="c" style="left:1098px;top:415.6px;width:60px;text-align:right;padding-right:2.3px;box-sizing:border-box;"><span style="display:inline-block;transform:scaleX(1.015);transform-origin:right;">(47 032)</span></div>
<div class="c" style="left:1158px;top:415.6px;width:60px;text-align:right;padding-right:2.3px;box-sizing:border-box;"><span style="display:inline-block;transform:scaleX(1.015);transform-origin:right;">(47 110)</span></div>
<div class="c" style="left:1218px;top:415.6px;width:61px;text-align:right;padding-right:2.3px;box-sizing:border-box;"><span style="display:inline-block;transform:scaleX(1.015);transform-origin:right;">(47 188)</span></div>
<div class="c" style="left:1279px;top:415.6px;width:60px;text-align:right;padding-right:2.3px;box-sizing:border-box;"><span style="display:inline-block;transform:scaleX(1.015);transform-origin:right;">(47 266)</span></div>
<div class="c" style="left:1339px;top:415.6px;width:60px;text-align:right;padding-right:2.3px;box-sizing:border-box;"><span style="display:inline-block;transform:scaleX(1.015);transform-origin:right;">(47 344)</span></div>
<div class="c" style="left:1399px;top:415.6px;width:60px;text-align:right;padding-right:2.3px;box-sizing:border-box;"><span style="display:inline-block;transform:scaleX(1.015);transform-origin:right;">(47 422)</span></div>
<div class="c" style="left:43px;top:429.6px;width:177px;text-align:left;padding-left:11px;box-sizing:border-box;">Cleaning</div>
<div class="c" style="left:330px;top:429.6px;width:19px;text-align:right;padding-right:2.4px;box-sizing:border-box;">2</div>
<div class="c" style="left:349px;top:429.6px;width:50px;text-align:center;padding-left:1px;box-sizing:border-box;"><span style="display:inline-block;transform:scaleX(0.885);transform-origin:center;">USD</span></div>
<div class="c" style="left:399px;top:429.6px;width:61px;text-align:right;padding-right:2.1px;box-sizing:border-box;"><span style="display:inline-block;transform:scaleX(1.015);transform-origin:right;">(1 421 075)</span></div>
<div class="c" style="left:460px;top:429.6px;width:55px;text-align:right;padding-right:2.1px;box-sizing:border-box;"><span style="display:inline-block;transform:scaleX(1.015);transform-origin:right;">(165 569)</span></div>
<div class="c" style="left:515px;top:429.6px;width:55px;text-align:right;padding-right:2.1px;box-sizing:border-box;"><span style="display:inline-block;transform:scaleX(1.015);transform-origin:right;">(168 881)</span></div>
<div class="c" style="left:570px;top:429.6px;width:55px;text-align:right;padding-right:2.1px;box-sizing:border-box;"><span style="display:inline-block;transform:scaleX(1.015);transform-origin:right;">(172 258)</span></div>
<div class="c" style="left:625px;top:429.6px;width:55px;text-align:right;padding-right:2.1px;box-sizing:border-box;"><span style="display:inline-block;transform:scaleX(1.015);transform-origin:right;">(175 703)</span></div>
<div class="c" style="left:680px;top:429.6px;width:55px;text-align:right;padding-right:2.1px;box-sizing:border-box;"><span style="display:inline-block;transform:scaleX(1.015);transform-origin:right;">(179 217)</span></div>
<div class="c" style="left:735px;top:429.6px;width:55px;text-align:right;padding-right:2.1px;box-sizing:border-box;"><span style="display:inline-block;transform:scaleX(1.015);transform-origin:right;">(182 802)</span></div>
<div class="c" style="left:790px;top:429.6px;width:55px;text-align:right;padding-right:2.1px;box-sizing:border-box;"><span style="display:inline-block;transform:scaleX(1.015);transform-origin:right;">(186 458)</span></div>
<div class="c" style="left:845px;top:429.6px;width:55px;text-align:right;padding-right:2.1px;box-sizing:border-box;"><span style="display:inline-block;transform:scaleX(1.015);transform-origin:right;">(190 187)</span></div>
<div class="c" style="left:978px;top:429.6px;width:60px;text-align:right;padding-right:2.3px;box-sizing:border-box;"><span style="display:inline-block;transform:scaleX(1.015);transform-origin:right;">(13 673)</span></div>
<div class="c" style="left:1038px;top:429.6px;width:60px;text-align:right;padding-right:2.3px;box-sizing:border-box;"><span style="display:inline-block;transform:scaleX(1.015);transform-origin:right;">(13 695)</span></div>
<div class="c" style="left:1098px;top:429.6px;width:60px;text-align:right;padding-right:2.3px;box-sizing:border-box;"><span style="display:inline-block;transform:scaleX(1.015);transform-origin:right;">(13 718)</span></div>
<div class="c" style="left:1158px;top:429.6px;width:60px;text-align:right;padding-right:2.3px;box-sizing:border-box;"><span style="display:inline-block;transform:scaleX(1.015);transform-origin:right;">(13 740)</span></div>
<div class="c" style="left:1218px;top:429.6px;width:61px;text-align:right;padding-right:2.3px;box-sizing:border-box;"><span style="display:inline-block;transform:scaleX(1.015);transform-origin:right;">(13 763)</span></div>
<div class="c" style="left:1279px;top:429.6px;width:60px;text-align:right;padding-right:2.3px;box-sizing:border-box;"><span style="display:inline-block;transform:scaleX(1.015);transform-origin:right;">(13 786)</span></div>
<div class="c" style="left:1339px;top:429.6px;width:60px;text-align:right;padding-right:2.3px;box-sizing:border-box;"><span style="display:inline-block;transform:scaleX(1.015);transform-origin:right;">(13 809)</span></div>
<div class="c" style="left:1399px;top:429.6px;width:60px;text-align:right;padding-right:2.3px;box-sizing:border-box;"><span style="display:inline-block;transform:scaleX(1.015);transform-origin:right;">(13 832)</span></div>
<div class="c" style="left:43px;top:443.6px;width:177px;text-align:left;padding-left:11px;box-sizing:border-box;">Security</div>
<div class="c" style="left:330px;top:443.6px;width:19px;text-align:right;padding-right:2.4px;box-sizing:border-box;">2</div>
<div class="c" style="left:349px;top:443.6px;width:50px;text-align:center;padding-left:1px;box-sizing:border-box;"><span style="display:inline-block;transform:scaleX(0.885);transform-origin:center;">USD</span></div>
<div class="c" style="left:399px;top:443.6px;width:61px;text-align:right;padding-right:2.1px;box-sizing:border-box;"><span style="display:inline-block;transform:scaleX(1.015);transform-origin:right;">(1 319 569)</span></div>
<div class="c" style="left:460px;top:443.6px;width:55px;text-align:right;padding-right:2.1px;box-sizing:border-box;"><span style="display:inline-block;transform:scaleX(1.015);transform-origin:right;">(153 743)</span></div>
<div class="c" style="left:515px;top:443.6px;width:55px;text-align:right;padding-right:2.1px;box-sizing:border-box;"><span style="display:inline-block;transform:scaleX(1.015);transform-origin:right;">(156 818)</span></div>
<div class="c" style="left:570px;top:443.6px;width:55px;text-align:right;padding-right:2.1px;box-sizing:border-box;"><span style="display:inline-block;transform:scaleX(1.015);transform-origin:right;">(159 954)</span></div>
<div class="c" style="left:625px;top:443.6px;width:55px;text-align:right;padding-right:2.1px;box-sizing:border-box;"><span style="display:inline-block;transform:scaleX(1.015);transform-origin:right;">(163 153)</span></div>
<div class="c" style="left:680px;top:443.6px;width:55px;text-align:right;padding-right:2.1px;box-sizing:border-box;"><span style="display:inline-block;transform:scaleX(1.015);transform-origin:right;">(166 416)</span></div>
<div class="c" style="left:735px;top:443.6px;width:55px;text-align:right;padding-right:2.1px;box-sizing:border-box;"><span style="display:inline-block;transform:scaleX(1.015);transform-origin:right;">(169 744)</span></div>
<div class="c" style="left:790px;top:443.6px;width:55px;text-align:right;padding-right:2.1px;box-sizing:border-box;"><span style="display:inline-block;transform:scaleX(1.015);transform-origin:right;">(173 139)</span></div>
<div class="c" style="left:845px;top:443.6px;width:55px;text-align:right;padding-right:2.1px;box-sizing:border-box;"><span style="display:inline-block;transform:scaleX(1.015);transform-origin:right;">(176 602)</span></div>
<div class="c" style="left:978px;top:443.6px;width:60px;text-align:right;padding-right:2.3px;box-sizing:border-box;"><span style="display:inline-block;transform:scaleX(1.015);transform-origin:right;">(12 696)</span></div>
<div class="c" style="left:1038px;top:443.6px;width:60px;text-align:right;padding-right:2.3px;box-sizing:border-box;"><span style="display:inline-block;transform:scaleX(1.015);transform-origin:right;">(12 717)</span></div>
<div class="c" style="left:1098px;top:443.6px;width:60px;text-align:right;padding-right:2.3px;box-sizing:border-box;"><span style="display:inline-block;transform:scaleX(1.015);transform-origin:right;">(12 738)</span></div>
<div class="c" style="left:1158px;top:443.6px;width:60px;text-align:right;padding-right:2.3px;box-sizing:border-box;"><span style="display:inline-block;transform:scaleX(1.015);transform-origin:right;">(12 759)</span></div>
<div class="c" style="left:1218px;top:443.6px;width:61px;text-align:right;padding-right:2.3px;box-sizing:border-box;"><span style="display:inline-block;transform:scaleX(1.015);transform-origin:right;">(12 780)</span></div>
<div class="c" style="left:1279px;top:443.6px;width:60px;text-align:right;padding-right:2.3px;box-sizing:border-box;"><span style="display:inline-block;transform:scaleX(1.015);transform-origin:right;">(12 801)</span></div>
<div class="c" style="left:1339px;top:443.6px;width:60px;text-align:right;padding-right:2.3px;box-sizing:border-box;"><span style="display:inline-block;transform:scaleX(1.015);transform-origin:right;">(12 822)</span></div>
<div class="c" style="left:1399px;top:443.6px;width:60px;text-align:right;padding-right:2.3px;box-sizing:border-box;"><span style="display:inline-block;transform:scaleX(1.015);transform-origin:right;">(12 843)</span></div>
<div class="c" style="left:43px;top:457.6px;width:177px;text-align:left;padding-left:11px;box-sizing:border-box;">Insurance</div>
<div class="c" style="left:330px;top:457.6px;width:19px;text-align:right;padding-right:2.4px;box-sizing:border-box;">2</div>
<div class="c" style="left:349px;top:457.6px;width:50px;text-align:center;padding-left:1px;box-sizing:border-box;"><span style="display:inline-block;transform:scaleX(0.885);transform-origin:center;">USD</span></div>
<div class="c" style="left:399px;top:457.6px;width:61px;text-align:right;padding-right:2.1px;box-sizing:border-box;"><span style="display:inline-block;transform:scaleX(1.015);transform-origin:right;">(507 527)</span></div>
<div class="c" style="left:460px;top:457.6px;width:55px;text-align:right;padding-right:2.1px;box-sizing:border-box;"><span style="display:inline-block;transform:scaleX(1.015);transform-origin:right;">(59 132)</span></div>
<div class="c" style="left:515px;top:457.6px;width:55px;text-align:right;padding-right:2.1px;box-sizing:border-box;"><span style="display:inline-block;transform:scaleX(1.015);transform-origin:right;">(60 314)</span></div>
<div class="c" style="left:570px;top:457.6px;width:55px;text-align:right;padding-right:2.1px;box-sizing:border-box;"><span style="display:inline-block;transform:scaleX(1.015);transform-origin:right;">(61 521)</span></div>
<div class="c" style="left:625px;top:457.6px;width:55px;text-align:right;padding-right:2.1px;box-sizing:border-box;"><span style="display:inline-block;transform:scaleX(1.015);transform-origin:right;">(62 751)</span></div>
<div class="c" style="left:680px;top:457.6px;width:55px;text-align:right;padding-right:2.1px;box-sizing:border-box;"><span style="display:inline-block;transform:scaleX(1.015);transform-origin:right;">(64 006)</span></div>
<div class="c" style="left:735px;top:457.6px;width:55px;text-align:right;padding-right:2.1px;box-sizing:border-box;"><span style="display:inline-block;transform:scaleX(1.015);transform-origin:right;">(65 286)</span></div>
<div class="c" style="left:790px;top:457.6px;width:55px;text-align:right;padding-right:2.1px;box-sizing:border-box;"><span style="display:inline-block;transform:scaleX(1.015);transform-origin:right;">(66 592)</span></div>
<div class="c" style="left:845px;top:457.6px;width:55px;text-align:right;padding-right:2.1px;box-sizing:border-box;"><span style="display:inline-block;transform:scaleX(1.015);transform-origin:right;">(67 924)</span></div>
<div class="c" style="left:978px;top:457.6px;width:60px;text-align:right;padding-right:2.3px;box-sizing:border-box;"><span style="display:inline-block;transform:scaleX(1.015);transform-origin:right;">(4 883)</span></div>
<div class="c" style="left:1038px;top:457.6px;width:60px;text-align:right;padding-right:2.3px;box-sizing:border-box;"><span style="display:inline-block;transform:scaleX(1.015);transform-origin:right;">(4 891)</span></div>
<div class="c" style="left:1098px;top:457.6px;width:60px;text-align:right;padding-right:2.3px;box-sizing:border-box;"><span style="display:inline-block;transform:scaleX(1.015);transform-origin:right;">(4 899)</span></div>
<div class="c" style="left:1158px;top:457.6px;width:60px;text-align:right;padding-right:2.3px;box-sizing:border-box;"><span style="display:inline-block;transform:scaleX(1.015);transform-origin:right;">(4 907)</span></div>
<div class="c" style="left:1218px;top:457.6px;width:61px;text-align:right;padding-right:2.3px;box-sizing:border-box;"><span style="display:inline-block;transform:scaleX(1.015);transform-origin:right;">(4 915)</span></div>
<div class="c" style="left:1279px;top:457.6px;width:60px;text-align:right;padding-right:2.3px;box-sizing:border-box;"><span style="display:inline-block;transform:scaleX(1.015);transform-origin:right;">(4 924)</span></div>
<div class="c" style="left:1339px;top:457.6px;width:60px;text-align:right;padding-right:2.3px;box-sizing:border-box;"><span style="display:inline-block;transform:scaleX(1.015);transform-origin:right;">(4 932)</span></div>
<div class="c" style="left:1399px;top:457.6px;width:60px;text-align:right;padding-right:2.3px;box-sizing:border-box;"><span style="display:inline-block;transform:scaleX(1.015);transform-origin:right;">(4 940)</span></div>
<div class="c" style="left:43px;top:471.6px;width:177px;text-align:left;padding-left:11px;box-sizing:border-box;">Property tax</div>
<div class="c" style="left:349px;top:471.6px;width:50px;text-align:center;padding-left:1px;box-sizing:border-box;"><span style="display:inline-block;transform:scaleX(0.885);transform-origin:center;">USD</span></div>
<div class="c" style="left:399px;top:471.6px;width:61px;text-align:right;padding-right:2.1px;box-sizing:border-box;"><span style="display:inline-block;transform:scaleX(1.015);transform-origin:right;">(7 547 833)</span></div>
<div class="c" style="left:460px;top:471.6px;width:55px;text-align:right;padding-right:2.1px;box-sizing:border-box;"><span style="display:inline-block;transform:scaleX(1.015);transform-origin:right;">(879 396)</span></div>
<div class="c" style="left:515px;top:471.6px;width:55px;text-align:right;padding-right:2.1px;box-sizing:border-box;"><span style="display:inline-block;transform:scaleX(1.015);transform-origin:right;">(896 984)</span></div>
<div class="c" style="left:570px;top:471.6px;width:55px;text-align:right;padding-right:2.1px;box-sizing:border-box;"><span style="display:inline-block;transform:scaleX(1.015);transform-origin:right;">(914 924)</span></div>
<div class="c" style="left:625px;top:471.6px;width:55px;text-align:right;padding-right:2.1px;box-sizing:border-box;"><span style="display:inline-block;transform:scaleX(1.015);transform-origin:right;">(933 223)</span></div>
<div class="c" style="left:680px;top:471.6px;width:55px;text-align:right;padding-right:2.1px;box-sizing:border-box;"><span style="display:inline-block;transform:scaleX(1.015);transform-origin:right;">(951 887)</span></div>
<div class="c" style="left:735px;top:471.6px;width:55px;text-align:right;padding-right:2.1px;box-sizing:border-box;"><span style="display:inline-block;transform:scaleX(1.015);transform-origin:right;">(970 925)</span></div>
<div class="c" style="left:790px;top:471.6px;width:55px;text-align:right;padding-right:2.1px;box-sizing:border-box;"><span style="display:inline-block;transform:scaleX(1.015);transform-origin:right;">(990 343)</span></div>
<div class="c" style="left:845px;top:471.6px;width:55px;text-align:right;padding-right:2.1px;box-sizing:border-box;"><span style="display:inline-block;transform:scaleX(1.015);transform-origin:right;">(1 010 150)</span></div>
<div class="c" style="left:978px;top:471.6px;width:60px;text-align:right;padding-right:2.3px;box-sizing:border-box;"><span style="display:inline-block;transform:scaleX(1.015);transform-origin:right;">(72 620)</span></div>
<div class="c" style="left:1038px;top:471.6px;width:60px;text-align:right;padding-right:2.3px;box-sizing:border-box;"><span style="display:inline-block;transform:scaleX(1.015);transform-origin:right;">(72 740)</span></div>
<div class="c" style="left:1098px;top:471.6px;width:60px;text-align:right;padding-right:2.3px;box-sizing:border-box;"><span style="display:inline-block;transform:scaleX(1.015);transform-origin:right;">(72 860)</span></div>
<div class="c" style="left:1158px;top:471.6px;width:60px;text-align:right;padding-right:2.3px;box-sizing:border-box;"><span style="display:inline-block;transform:scaleX(1.015);transform-origin:right;">(72 980)</span></div>
<div class="c" style="left:1218px;top:471.6px;width:61px;text-align:right;padding-right:2.3px;box-sizing:border-box;"><span style="display:inline-block;transform:scaleX(1.015);transform-origin:right;">(73 101)</span></div>
<div class="c" style="left:1279px;top:471.6px;width:60px;text-align:right;padding-right:2.3px;box-sizing:border-box;"><span style="display:inline-block;transform:scaleX(1.015);transform-origin:right;">(73 221)</span></div>
<div class="c" style="left:1339px;top:471.6px;width:60px;text-align:right;padding-right:2.3px;box-sizing:border-box;"><span style="display:inline-block;transform:scaleX(1.015);transform-origin:right;">(73 342)</span></div>
<div class="c" style="left:1399px;top:471.6px;width:60px;text-align:right;padding-right:2.3px;box-sizing:border-box;"><span style="display:inline-block;transform:scaleX(1.015);transform-origin:right;">(73 463)</span></div>
<div class="c" style="left:220px;top:373.6px;width:55px;text-align:left;padding-left:2.5px;box-sizing:border-box;color:#24508f;">% of GPI</div>
<div class="c" style="left:275px;top:373.6px;width:55px;text-align:right;padding-right:2.8px;box-sizing:border-box;color:#24508f;">1.5%</div>
<div class="c" style="left:220px;top:387.6px;width:55px;text-align:left;padding-left:2.5px;box-sizing:border-box;color:#24508f;">Fixed</div>
<div class="c" style="left:275px;top:387.6px;width:55px;text-align:right;padding-right:4.8px;box-sizing:border-box;color:#24508f;">158 700</div>
<div class="c" style="left:220px;top:401.6px;width:55px;text-align:left;padding-left:2.5px;box-sizing:border-box;color:#24508f;"><span style="display:inline-block;transform:scaleX(0.969);transform-origin:left;">Per sqm</span></div>
<div class="c" style="left:275px;top:401.6px;width:55px;text-align:right;padding-right:4.8px;box-sizing:border-box;color:#24508f;">7.00</div>
<div class="c" style="left:220px;top:415.6px;width:55px;text-align:left;padding-left:2.5px;box-sizing:border-box;color:#24508f;"><span style="display:inline-block;transform:scaleX(0.969);transform-origin:left;">Per sqm</span></div>
<div class="c" style="left:275px;top:415.6px;width:55px;text-align:right;padding-right:4.8px;box-sizing:border-box;color:#24508f;">24.00</div>
<div class="c" style="left:220px;top:429.6px;width:55px;text-align:left;padding-left:2.5px;box-sizing:border-box;color:#24508f;"><span style="display:inline-block;transform:scaleX(0.969);transform-origin:left;">Per sqm</span></div>
<div class="c" style="left:275px;top:429.6px;width:55px;text-align:right;padding-right:4.8px;box-sizing:border-box;color:#24508f;">7.00</div>
<div class="c" style="left:220px;top:443.6px;width:55px;text-align:left;padding-left:2.5px;box-sizing:border-box;color:#24508f;"><span style="display:inline-block;transform:scaleX(0.969);transform-origin:left;">Per sqm</span></div>
<div class="c" style="left:275px;top:443.6px;width:55px;text-align:right;padding-right:4.8px;box-sizing:border-box;color:#24508f;">6.50</div>
<div class="c" style="left:220px;top:457.6px;width:55px;text-align:left;padding-left:2.5px;box-sizing:border-box;color:#24508f;"><span style="display:inline-block;transform:scaleX(0.969);transform-origin:left;">Per sqm</span></div>
<div class="c" style="left:275px;top:457.6px;width:55px;text-align:right;padding-right:4.8px;box-sizing:border-box;color:#24508f;">2.50</div>
<div class="c" style="left:220px;top:513.6px;width:55px;text-align:left;padding-left:2.5px;box-sizing:border-box;color:#24508f;">Fixed</div>
<div class="c" style="left:275px;top:513.6px;width:55px;text-align:right;padding-right:4.8px;box-sizing:border-box;color:#24508f;">32 000</div>
<div class="c" style="left:220px;top:527.6px;width:55px;text-align:left;padding-left:2.5px;box-sizing:border-box;color:#24508f;">Fixed</div>
<div class="c" style="left:275px;top:527.6px;width:55px;text-align:right;padding-right:4.8px;box-sizing:border-box;color:#24508f;">11 000</div>
<div class="c" style="left:220px;top:625.6px;width:55px;text-align:left;padding-left:2.5px;box-sizing:border-box;color:#24508f;">Fixed</div>
<div class="c" style="left:275px;top:625.6px;width:55px;text-align:right;padding-right:4.8px;box-sizing:border-box;color:#24508f;">12 500</div>
<div class="c" style="left:220px;top:471.6px;width:55px;text-align:right;padding-right:2.8px;box-sizing:border-box;">29 000 000</div>
<div class="c" style="left:275px;top:471.6px;width:55px;text-align:right;padding-right:2.8px;box-sizing:border-box;">3%</div>
<div class="c" style="left:43px;top:499.6px;width:177px;text-align:left;padding-left:3px;box-sizing:border-box;font-weight:bold;"><span style="display:inline-block;transform:scaleX(0.94);transform-origin:left;">NON-RECOVERABLE EXPENSES</span></div>
<div class="c" style="left:349px;top:499.6px;width:50px;text-align:center;padding-left:1px;box-sizing:border-box;font-weight:bold;"><span style="display:inline-block;transform:scaleX(0.885);transform-origin:center;">USD</span></div>
<div class="c" style="left:399px;top:499.6px;width:61px;text-align:right;padding-right:2.1px;box-sizing:border-box;font-weight:bold;"><span style="display:inline-block;transform:scaleX(1.015);transform-origin:right;">(2 922 276)</span></div>
<div class="c" style="left:460px;top:499.6px;width:55px;text-align:right;padding-right:2.1px;box-sizing:border-box;font-weight:bold;"><span style="display:inline-block;transform:scaleX(1.015);transform-origin:right;">(108 531)</span></div>
<div class="c" style="left:515px;top:499.6px;width:55px;text-align:right;padding-right:2.1px;box-sizing:border-box;font-weight:bold;"><span style="display:inline-block;transform:scaleX(1.015);transform-origin:right;">(310 297)</span></div>
<div class="c" style="left:570px;top:499.6px;width:55px;text-align:right;padding-right:2.1px;box-sizing:border-box;font-weight:bold;"><span style="display:inline-block;transform:scaleX(1.015);transform-origin:right;">(321 443)</span></div>
<div class="c" style="left:625px;top:499.6px;width:55px;text-align:right;padding-right:2.1px;box-sizing:border-box;font-weight:bold;"><span style="display:inline-block;transform:scaleX(1.015);transform-origin:right;">(449 522)</span></div>
<div class="c" style="left:680px;top:499.6px;width:55px;text-align:right;padding-right:2.1px;box-sizing:border-box;font-weight:bold;"><span style="display:inline-block;transform:scaleX(1.015);transform-origin:right;">(717 454)</span></div>
<div class="c" style="left:735px;top:499.6px;width:55px;text-align:right;padding-right:2.1px;box-sizing:border-box;font-weight:bold;"><span style="display:inline-block;transform:scaleX(1.015);transform-origin:right;">(285 960)</span></div>
<div class="c" style="left:790px;top:499.6px;width:55px;text-align:right;padding-right:2.1px;box-sizing:border-box;font-weight:bold;"><span style="display:inline-block;transform:scaleX(1.015);transform-origin:right;">(512 435)</span></div>
<div class="c" style="left:845px;top:499.6px;width:55px;text-align:right;padding-right:2.1px;box-sizing:border-box;font-weight:bold;"><span style="display:inline-block;transform:scaleX(1.015);transform-origin:right;">(216 633)</span></div>
<div class="c" style="left:978px;top:499.6px;width:60px;text-align:right;padding-right:2.3px;box-sizing:border-box;font-weight:bold;"><span style="display:inline-block;transform:scaleX(1.015);transform-origin:right;">(3 589)</span></div>
<div class="c" style="left:1038px;top:499.6px;width:60px;text-align:right;padding-right:2.3px;box-sizing:border-box;font-weight:bold;"><span style="display:inline-block;transform:scaleX(1.015);transform-origin:right;">(3 595)</span></div>
<div class="c" style="left:1098px;top:499.6px;width:60px;text-align:right;padding-right:2.3px;box-sizing:border-box;font-weight:bold;"><span style="display:inline-block;transform:scaleX(1.015);transform-origin:right;">(3 601)</span></div>
<div class="c" style="left:1158px;top:499.6px;width:60px;text-align:right;padding-right:2.3px;box-sizing:border-box;font-weight:bold;"><span style="display:inline-block;transform:scaleX(1.015);transform-origin:right;">(68 674)</span></div>
<div class="c" style="left:1218px;top:499.6px;width:61px;text-align:right;padding-right:2.3px;box-sizing:border-box;font-weight:bold;"><span style="display:inline-block;transform:scaleX(1.015);transform-origin:right;">(3 613)</span></div>
<div class="c" style="left:1279px;top:499.6px;width:60px;text-align:right;padding-right:2.3px;box-sizing:border-box;font-weight:bold;"><span style="display:inline-block;transform:scaleX(1.015);transform-origin:right;">(3 619)</span></div>
<div class="c" style="left:1339px;top:499.6px;width:60px;text-align:right;padding-right:2.3px;box-sizing:border-box;font-weight:bold;"><span style="display:inline-block;transform:scaleX(1.015);transform-origin:right;">(3 625)</span></div>
<div class="c" style="left:1399px;top:499.6px;width:60px;text-align:right;padding-right:2.3px;box-sizing:border-box;font-weight:bold;"><span style="display:inline-block;transform:scaleX(1.015);transform-origin:right;">(3 631)</span></div>
<div class="c" style="left:43px;top:513.6px;width:177px;text-align:left;padding-left:11px;box-sizing:border-box;">Sales and marketing</div>
<div class="c" style="left:330px;top:513.6px;width:19px;text-align:right;padding-right:2.4px;box-sizing:border-box;">1</div>
<div class="c" style="left:349px;top:513.6px;width:50px;text-align:center;padding-left:1px;box-sizing:border-box;"><span style="display:inline-block;transform:scaleX(0.885);transform-origin:center;">USD</span></div>
<div class="c" style="left:399px;top:513.6px;width:61px;text-align:right;padding-right:2.1px;box-sizing:border-box;"><span style="display:inline-block;transform:scaleX(1.015);transform-origin:right;">(277 621)</span></div>
<div class="c" style="left:460px;top:513.6px;width:55px;text-align:right;padding-right:2.1px;box-sizing:border-box;"><span style="display:inline-block;transform:scaleX(1.015);transform-origin:right;">(32 346)</span></div>
<div class="c" style="left:515px;top:513.6px;width:55px;text-align:right;padding-right:2.1px;box-sizing:border-box;"><span style="display:inline-block;transform:scaleX(1.015);transform-origin:right;">(32 993)</span></div>
<div class="c" style="left:570px;top:513.6px;width:55px;text-align:right;padding-right:2.1px;box-sizing:border-box;"><span style="display:inline-block;transform:scaleX(1.015);transform-origin:right;">(33 652)</span></div>
<div class="c" style="left:625px;top:513.6px;width:55px;text-align:right;padding-right:2.1px;box-sizing:border-box;"><span style="display:inline-block;transform:scaleX(1.015);transform-origin:right;">(34 325)</span></div>
<div class="c" style="left:680px;top:513.6px;width:55px;text-align:right;padding-right:2.1px;box-sizing:border-box;"><span style="display:inline-block;transform:scaleX(1.015);transform-origin:right;">(35 012)</span></div>
<div class="c" style="left:735px;top:513.6px;width:55px;text-align:right;padding-right:2.1px;box-sizing:border-box;"><span style="display:inline-block;transform:scaleX(1.015);transform-origin:right;">(35 712)</span></div>
<div class="c" style="left:790px;top:513.6px;width:55px;text-align:right;padding-right:2.1px;box-sizing:border-box;"><span style="display:inline-block;transform:scaleX(1.015);transform-origin:right;">(36 426)</span></div>
<div class="c" style="left:845px;top:513.6px;width:55px;text-align:right;padding-right:2.1px;box-sizing:border-box;"><span style="display:inline-block;transform:scaleX(1.015);transform-origin:right;">(37 155)</span></div>
<div class="c" style="left:978px;top:513.6px;width:60px;text-align:right;padding-right:2.3px;box-sizing:border-box;"><span style="display:inline-block;transform:scaleX(1.015);transform-origin:right;">(2 671)</span></div>
<div class="c" style="left:1038px;top:513.6px;width:60px;text-align:right;padding-right:2.3px;box-sizing:border-box;"><span style="display:inline-block;transform:scaleX(1.015);transform-origin:right;">(2 675)</span></div>
<div class="c" style="left:1098px;top:513.6px;width:60px;text-align:right;padding-right:2.3px;box-sizing:border-box;"><span style="display:inline-block;transform:scaleX(1.015);transform-origin:right;">(2 680)</span></div>
<div class="c" style="left:1158px;top:513.6px;width:60px;text-align:right;padding-right:2.3px;box-sizing:border-box;"><span style="display:inline-block;transform:scaleX(1.015);transform-origin:right;">(2 684)</span></div>
<div class="c" style="left:1218px;top:513.6px;width:61px;text-align:right;padding-right:2.3px;box-sizing:border-box;"><span style="display:inline-block;transform:scaleX(1.015);transform-origin:right;">(2 689)</span></div>
<div class="c" style="left:1279px;top:513.6px;width:60px;text-align:right;padding-right:2.3px;box-sizing:border-box;"><span style="display:inline-block;transform:scaleX(1.015);transform-origin:right;">(2 693)</span></div>
<div class="c" style="left:1339px;top:513.6px;width:60px;text-align:right;padding-right:2.3px;box-sizing:border-box;"><span style="display:inline-block;transform:scaleX(1.015);transform-origin:right;">(2 698)</span></div>
<div class="c" style="left:1399px;top:513.6px;width:60px;text-align:right;padding-right:2.3px;box-sizing:border-box;"><span style="display:inline-block;transform:scaleX(1.015);transform-origin:right;">(2 702)</span></div>
<div class="c" style="left:43px;top:527.6px;width:177px;text-align:left;padding-left:11px;box-sizing:border-box;">Other</div>
<div class="c" style="left:330px;top:527.6px;width:19px;text-align:right;padding-right:2.4px;box-sizing:border-box;">1</div>
<div class="c" style="left:349px;top:527.6px;width:50px;text-align:center;padding-left:1px;box-sizing:border-box;"><span style="display:inline-block;transform:scaleX(0.885);transform-origin:center;">USD</span></div>
<div class="c" style="left:399px;top:527.6px;width:61px;text-align:right;padding-right:2.1px;box-sizing:border-box;"><span style="display:inline-block;transform:scaleX(1.015);transform-origin:right;">(95 432)</span></div>
<div class="c" style="left:460px;top:527.6px;width:55px;text-align:right;padding-right:2.1px;box-sizing:border-box;"><span style="display:inline-block;transform:scaleX(1.015);transform-origin:right;">(11 119)</span></div>
<div class="c" style="left:515px;top:527.6px;width:55px;text-align:right;padding-right:2.1px;box-sizing:border-box;"><span style="display:inline-block;transform:scaleX(1.015);transform-origin:right;">(11 341)</span></div>
<div class="c" style="left:570px;top:527.6px;width:55px;text-align:right;padding-right:2.1px;box-sizing:border-box;"><span style="display:inline-block;transform:scaleX(1.015);transform-origin:right;">(11 568)</span></div>
<div class="c" style="left:625px;top:527.6px;width:55px;text-align:right;padding-right:2.1px;box-sizing:border-box;"><span style="display:inline-block;transform:scaleX(1.015);transform-origin:right;">(11 799)</span></div>
<div class="c" style="left:680px;top:527.6px;width:55px;text-align:right;padding-right:2.1px;box-sizing:border-box;"><span style="display:inline-block;transform:scaleX(1.015);transform-origin:right;">(12 035)</span></div>
<div class="c" style="left:735px;top:527.6px;width:55px;text-align:right;padding-right:2.1px;box-sizing:border-box;"><span style="display:inline-block;transform:scaleX(1.015);transform-origin:right;">(12 276)</span></div>
<div class="c" style="left:790px;top:527.6px;width:55px;text-align:right;padding-right:2.1px;box-sizing:border-box;"><span style="display:inline-block;transform:scaleX(1.015);transform-origin:right;">(12 522)</span></div>
<div class="c" style="left:845px;top:527.6px;width:55px;text-align:right;padding-right:2.1px;box-sizing:border-box;"><span style="display:inline-block;transform:scaleX(1.015);transform-origin:right;">(12 772)</span></div>
<div class="c" style="left:978px;top:527.6px;width:60px;text-align:right;padding-right:2.3px;box-sizing:border-box;"><span style="display:inline-block;transform:scaleX(1.015);transform-origin:right;">(918)</span></div>
<div class="c" style="left:1038px;top:527.6px;width:60px;text-align:right;padding-right:2.3px;box-sizing:border-box;"><span style="display:inline-block;transform:scaleX(1.015);transform-origin:right;">(920)</span></div>
<div class="c" style="left:1098px;top:527.6px;width:60px;text-align:right;padding-right:2.3px;box-sizing:border-box;"><span style="display:inline-block;transform:scaleX(1.015);transform-origin:right;">(921)</span></div>
<div class="c" style="left:1158px;top:527.6px;width:60px;text-align:right;padding-right:2.3px;box-sizing:border-box;"><span style="display:inline-block;transform:scaleX(1.015);transform-origin:right;">(923)</span></div>
<div class="c" style="left:1218px;top:527.6px;width:61px;text-align:right;padding-right:2.3px;box-sizing:border-box;"><span style="display:inline-block;transform:scaleX(1.015);transform-origin:right;">(924)</span></div>
<div class="c" style="left:1279px;top:527.6px;width:60px;text-align:right;padding-right:2.3px;box-sizing:border-box;"><span style="display:inline-block;transform:scaleX(1.015);transform-origin:right;">(926)</span></div>
<div class="c" style="left:1339px;top:527.6px;width:60px;text-align:right;padding-right:2.3px;box-sizing:border-box;"><span style="display:inline-block;transform:scaleX(1.015);transform-origin:right;">(927)</span></div>
<div class="c" style="left:1399px;top:527.6px;width:60px;text-align:right;padding-right:2.3px;box-sizing:border-box;"><span style="display:inline-block;transform:scaleX(1.015);transform-origin:right;">(929)</span></div>
<div class="c" style="left:43px;top:541.6px;width:177px;text-align:left;padding-left:11px;box-sizing:border-box;">Brokerage</div>
<div class="c" style="left:349px;top:541.6px;width:50px;text-align:center;padding-left:1px;box-sizing:border-box;"><span style="display:inline-block;transform:scaleX(0.885);transform-origin:center;">USD</span></div>
<div class="c" style="left:399px;top:541.6px;width:61px;text-align:right;padding-right:2.1px;box-sizing:border-box;"><span style="display:inline-block;transform:scaleX(1.015);transform-origin:right;">(2 209 222)</span></div>
<div class="c" style="left:460px;top:541.6px;width:55px;text-align:right;padding-right:2.1px;box-sizing:border-box;"><span style="display:inline-block;transform:scaleX(1.015);transform-origin:right;">(45 067)</span></div>
<div class="c" style="left:515px;top:541.6px;width:55px;text-align:right;padding-right:2.1px;box-sizing:border-box;"><span style="display:inline-block;transform:scaleX(1.015);transform-origin:right;">(225 963)</span></div>
<div class="c" style="left:570px;top:541.6px;width:55px;text-align:right;padding-right:2.1px;box-sizing:border-box;"><span style="display:inline-block;transform:scaleX(1.015);transform-origin:right;">(236 223)</span></div>
<div class="c" style="left:625px;top:541.6px;width:55px;text-align:right;padding-right:2.1px;box-sizing:border-box;"><span style="display:inline-block;transform:scaleX(1.015);transform-origin:right;">(343 398)</span></div>
<div class="c" style="left:680px;top:541.6px;width:55px;text-align:right;padding-right:2.1px;box-sizing:border-box;"><span style="display:inline-block;transform:scaleX(1.015);transform-origin:right;">(610 407)</span></div>
<div class="c" style="left:735px;top:541.6px;width:55px;text-align:right;padding-right:2.1px;box-sizing:border-box;"><span style="display:inline-block;transform:scaleX(1.015);transform-origin:right;">(197 972)</span></div>
<div class="c" style="left:790px;top:541.6px;width:55px;text-align:right;padding-right:2.1px;box-sizing:border-box;"><span style="display:inline-block;transform:scaleX(1.015);transform-origin:right;">(423 487)</span></div>
<div class="c" style="left:845px;top:541.6px;width:55px;text-align:right;padding-right:2.1px;box-sizing:border-box;"><span style="display:inline-block;transform:scaleX(1.015);transform-origin:right;">(126 706)</span></div>
<div class="c" style="left:978px;top:541.6px;width:60px;text-align:right;padding-right:5.6px;box-sizing:border-box;">-</div>
<div class="c" style="left:1038px;top:541.6px;width:60px;text-align:right;padding-right:5.6px;box-sizing:border-box;">-</div>
<div class="c" style="left:1098px;top:541.6px;width:60px;text-align:right;padding-right:5.6px;box-sizing:border-box;">-</div>
<div class="c" style="left:1158px;top:541.6px;width:60px;text-align:right;padding-right:2.3px;box-sizing:border-box;"><span style="display:inline-block;transform:scaleX(1.015);transform-origin:right;">(45 067)</span></div>
<div class="c" style="left:1218px;top:541.6px;width:61px;text-align:right;padding-right:5.6px;box-sizing:border-box;">-</div>
<div class="c" style="left:1279px;top:541.6px;width:60px;text-align:right;padding-right:5.6px;box-sizing:border-box;">-</div>
<div class="c" style="left:1339px;top:541.6px;width:60px;text-align:right;padding-right:5.6px;box-sizing:border-box;">-</div>
<div class="c" style="left:1399px;top:541.6px;width:60px;text-align:right;padding-right:5.6px;box-sizing:border-box;">-</div>
<div class="c" style="left:43px;top:555.6px;width:177px;text-align:left;padding-left:11px;box-sizing:border-box;">Legal</div>
<div class="c" style="left:349px;top:555.6px;width:50px;text-align:center;padding-left:1px;box-sizing:border-box;"><span style="display:inline-block;transform:scaleX(0.885);transform-origin:center;">USD</span></div>
<div class="c" style="left:399px;top:555.6px;width:61px;text-align:right;padding-right:2.1px;box-sizing:border-box;"><span style="display:inline-block;transform:scaleX(1.015);transform-origin:right;">(340 000)</span></div>
<div class="c" style="left:460px;top:555.6px;width:55px;text-align:right;padding-right:2.1px;box-sizing:border-box;"><span style="display:inline-block;transform:scaleX(1.015);transform-origin:right;">(20 000)</span></div>
<div class="c" style="left:515px;top:555.6px;width:55px;text-align:right;padding-right:2.1px;box-sizing:border-box;"><span style="display:inline-block;transform:scaleX(1.015);transform-origin:right;">(40 000)</span></div>
<div class="c" style="left:570px;top:555.6px;width:55px;text-align:right;padding-right:2.1px;box-sizing:border-box;"><span style="display:inline-block;transform:scaleX(1.015);transform-origin:right;">(40 000)</span></div>
<div class="c" style="left:625px;top:555.6px;width:55px;text-align:right;padding-right:2.1px;box-sizing:border-box;"><span style="display:inline-block;transform:scaleX(1.015);transform-origin:right;">(60 000)</span></div>
<div class="c" style="left:680px;top:555.6px;width:55px;text-align:right;padding-right:2.1px;box-sizing:border-box;"><span style="display:inline-block;transform:scaleX(1.015);transform-origin:right;">(60 000)</span></div>
<div class="c" style="left:735px;top:555.6px;width:55px;text-align:right;padding-right:2.1px;box-sizing:border-box;"><span style="display:inline-block;transform:scaleX(1.015);transform-origin:right;">(40 000)</span></div>
<div class="c" style="left:790px;top:555.6px;width:55px;text-align:right;padding-right:2.1px;box-sizing:border-box;"><span style="display:inline-block;transform:scaleX(1.015);transform-origin:right;">(40 000)</span></div>
<div class="c" style="left:845px;top:555.6px;width:55px;text-align:right;padding-right:2.1px;box-sizing:border-box;"><span style="display:inline-block;transform:scaleX(1.015);transform-origin:right;">(40 000)</span></div>
<div class="c" style="left:978px;top:555.6px;width:60px;text-align:right;padding-right:5.6px;box-sizing:border-box;">-</div>
<div class="c" style="left:1038px;top:555.6px;width:60px;text-align:right;padding-right:5.6px;box-sizing:border-box;">-</div>
<div class="c" style="left:1098px;top:555.6px;width:60px;text-align:right;padding-right:5.6px;box-sizing:border-box;">-</div>
<div class="c" style="left:1158px;top:555.6px;width:60px;text-align:right;padding-right:2.3px;box-sizing:border-box;"><span style="display:inline-block;transform:scaleX(1.015);transform-origin:right;">(20 000)</span></div>
<div class="c" style="left:1218px;top:555.6px;width:61px;text-align:right;padding-right:5.6px;box-sizing:border-box;">-</div>
<div class="c" style="left:1279px;top:555.6px;width:60px;text-align:right;padding-right:5.6px;box-sizing:border-box;">-</div>
<div class="c" style="left:1339px;top:555.6px;width:60px;text-align:right;padding-right:5.6px;box-sizing:border-box;">-</div>
<div class="c" style="left:1399px;top:555.6px;width:60px;text-align:right;padding-right:5.6px;box-sizing:border-box;">-</div>
<div class="c" style="left:43px;top:583.6px;width:177px;text-align:left;padding-left:3px;box-sizing:border-box;font-weight:bold;"><span style="display:inline-block;transform:scaleX(0.946);transform-origin:left;">TOTAL OPERATING EXPENSES</span></div>
<div class="c" style="left:349px;top:583.6px;width:50px;text-align:center;padding-left:1px;box-sizing:border-box;font-weight:bold;"><span style="display:inline-block;transform:scaleX(0.885);transform-origin:center;">USD</span></div>
<div class="c" style="left:399px;top:583.6px;width:61px;text-align:right;padding-right:2.1px;box-sizing:border-box;font-weight:bold;"><span style="display:inline-block;transform:scaleX(1.015);transform-origin:right;">(23 304 177)</span></div>
<div class="c" style="left:460px;top:583.6px;width:55px;text-align:right;padding-right:2.1px;box-sizing:border-box;font-weight:bold;"><span style="display:inline-block;transform:scaleX(1.015);transform-origin:right;">(2 480 593)</span></div>
<div class="c" style="left:515px;top:583.6px;width:55px;text-align:right;padding-right:2.1px;box-sizing:border-box;font-weight:bold;"><span style="display:inline-block;transform:scaleX(1.015);transform-origin:right;">(2 727 638)</span></div>
<div class="c" style="left:570px;top:583.6px;width:55px;text-align:right;padding-right:2.1px;box-sizing:border-box;font-weight:bold;"><span style="display:inline-block;transform:scaleX(1.015);transform-origin:right;">(2 787 119)</span></div>
<div class="c" style="left:625px;top:583.6px;width:55px;text-align:right;padding-right:2.1px;box-sizing:border-box;font-weight:bold;"><span style="display:inline-block;transform:scaleX(1.015);transform-origin:right;">(2 967 087)</span></div>
<div class="c" style="left:680px;top:583.6px;width:55px;text-align:right;padding-right:2.1px;box-sizing:border-box;font-weight:bold;"><span style="display:inline-block;transform:scaleX(1.015);transform-origin:right;">(3 283 944)</span></div>
<div class="c" style="left:735px;top:583.6px;width:55px;text-align:right;padding-right:2.1px;box-sizing:border-box;font-weight:bold;"><span style="display:inline-block;transform:scaleX(1.015);transform-origin:right;">(2 912 054)</span></div>
<div class="c" style="left:790px;top:583.6px;width:55px;text-align:right;padding-right:2.1px;box-sizing:border-box;font-weight:bold;"><span style="display:inline-block;transform:scaleX(1.015);transform-origin:right;">(3 191 431)</span></div>
<div class="c" style="left:845px;top:583.6px;width:55px;text-align:right;padding-right:2.1px;box-sizing:border-box;font-weight:bold;"><span style="display:inline-block;transform:scaleX(1.015);transform-origin:right;">(2 954 310)</span></div>
<div class="c" style="left:978px;top:583.6px;width:60px;text-align:right;padding-right:2.3px;box-sizing:border-box;font-weight:bold;"><span style="display:inline-block;transform:scaleX(1.015);transform-origin:right;">(199 558)</span></div>
<div class="c" style="left:1038px;top:583.6px;width:60px;text-align:right;padding-right:2.3px;box-sizing:border-box;font-weight:bold;"><span style="display:inline-block;transform:scaleX(1.015);transform-origin:right;">(199 876)</span></div>
<div class="c" style="left:1098px;top:583.6px;width:60px;text-align:right;padding-right:2.3px;box-sizing:border-box;font-weight:bold;"><span style="display:inline-block;transform:scaleX(1.015);transform-origin:right;">(200 197)</span></div>
<div class="c" style="left:1158px;top:583.6px;width:60px;text-align:right;padding-right:2.3px;box-sizing:border-box;font-weight:bold;"><span style="display:inline-block;transform:scaleX(1.015);transform-origin:right;">(265 246)</span></div>
<div class="c" style="left:1218px;top:583.6px;width:61px;text-align:right;padding-right:2.3px;box-sizing:border-box;font-weight:bold;"><span style="display:inline-block;transform:scaleX(1.015);transform-origin:right;">(200 480)</span></div>
<div class="c" style="left:1279px;top:583.6px;width:60px;text-align:right;padding-right:2.3px;box-sizing:border-box;font-weight:bold;"><span style="display:inline-block;transform:scaleX(1.015);transform-origin:right;">(201 227)</span></div>
<div class="c" style="left:1339px;top:583.6px;width:60px;text-align:right;padding-right:2.3px;box-sizing:border-box;font-weight:bold;"><span style="display:inline-block;transform:scaleX(1.015);transform-origin:right;">(201 546)</span></div>
<div class="c" style="left:1399px;top:583.6px;width:60px;text-align:right;padding-right:2.3px;box-sizing:border-box;font-weight:bold;"><span style="display:inline-block;transform:scaleX(1.015);transform-origin:right;">(201 868)</span></div>
<div class="c" style="left:43px;top:597.6px;width:177px;text-align:left;padding-left:11px;box-sizing:border-box;"><span style="display:inline-block;transform:scaleX(1.043);transform-origin:left;">adjusted for inflation</span></div>
<div class="c" style="left:349px;top:597.6px;width:50px;text-align:center;padding-left:1px;box-sizing:border-box;"><span style="display:inline-block;transform:scaleX(0.885);transform-origin:center;">USD</span></div>
<div class="c" style="left:399px;top:597.6px;width:61px;text-align:right;padding-right:2.1px;box-sizing:border-box;"><span style="display:inline-block;transform:scaleX(1.015);transform-origin:right;">(25 339 561)</span></div>
<div class="c" style="left:460px;top:597.6px;width:55px;text-align:right;padding-right:2.1px;box-sizing:border-box;"><span style="display:inline-block;transform:scaleX(1.015);transform-origin:right;">(2 507 193)</span></div>
<div class="c" style="left:515px;top:597.6px;width:55px;text-align:right;padding-right:2.1px;box-sizing:border-box;"><span style="display:inline-block;transform:scaleX(1.015);transform-origin:right;">(2 812 889)</span></div>
<div class="c" style="left:570px;top:597.6px;width:55px;text-align:right;padding-right:2.1px;box-sizing:border-box;"><span style="display:inline-block;transform:scaleX(1.015);transform-origin:right;">(2 930 774)</span></div>
<div class="c" style="left:625px;top:597.6px;width:55px;text-align:right;padding-right:2.1px;box-sizing:border-box;"><span style="display:inline-block;transform:scaleX(1.015);transform-origin:right;">(3 182 094)</span></div>
<div class="c" style="left:680px;top:597.6px;width:55px;text-align:right;padding-right:2.1px;box-sizing:border-box;"><span style="display:inline-block;transform:scaleX(1.015);transform-origin:right;">(3 595 773)</span></div>
<div class="c" style="left:735px;top:597.6px;width:55px;text-align:right;padding-right:2.1px;box-sizing:border-box;"><span style="display:inline-block;transform:scaleX(1.015);transform-origin:right;">(3 249 950)</span></div>
<div class="c" style="left:790px;top:597.6px;width:55px;text-align:right;padding-right:2.1px;box-sizing:border-box;"><span style="display:inline-block;transform:scaleX(1.015);transform-origin:right;">(3 631 812)</span></div>
<div class="c" style="left:845px;top:597.6px;width:55px;text-align:right;padding-right:2.1px;box-sizing:border-box;"><span style="display:inline-block;transform:scaleX(1.015);transform-origin:right;">(3 429 075)</span></div>
<div class="c" style="left:978px;top:597.6px;width:60px;text-align:right;padding-right:2.3px;box-sizing:border-box;"><span style="display:inline-block;transform:scaleX(1.015);transform-origin:right;">(199 888)</span></div>
<div class="c" style="left:1038px;top:597.6px;width:60px;text-align:right;padding-right:2.3px;box-sizing:border-box;"><span style="display:inline-block;transform:scaleX(1.015);transform-origin:right;">(200 537)</span></div>
<div class="c" style="left:1098px;top:597.6px;width:60px;text-align:right;padding-right:2.3px;box-sizing:border-box;"><span style="display:inline-block;transform:scaleX(1.015);transform-origin:right;">(201 191)</span></div>
<div class="c" style="left:1158px;top:597.6px;width:60px;text-align:right;padding-right:2.3px;box-sizing:border-box;"><span style="display:inline-block;transform:scaleX(1.015);transform-origin:right;">(267 003)</span></div>
<div class="c" style="left:1218px;top:597.6px;width:61px;text-align:right;padding-right:2.3px;box-sizing:border-box;"><span style="display:inline-block;transform:scaleX(1.015);transform-origin:right;">(202 141)</span></div>
<div class="c" style="left:1279px;top:597.6px;width:60px;text-align:right;padding-right:2.3px;box-sizing:border-box;"><span style="display:inline-block;transform:scaleX(1.015);transform-origin:right;">(203 229)</span></div>
<div class="c" style="left:1339px;top:597.6px;width:60px;text-align:right;padding-right:2.3px;box-sizing:border-box;"><span style="display:inline-block;transform:scaleX(1.015);transform-origin:right;">(203 888)</span></div>
<div class="c" style="left:1399px;top:597.6px;width:60px;text-align:right;padding-right:2.3px;box-sizing:border-box;"><span style="display:inline-block;transform:scaleX(1.015);transform-origin:right;">(204 547)</span></div>
<div class="c" style="left:43px;top:625.6px;width:177px;text-align:left;padding-left:3px;box-sizing:border-box;font-weight:bold;"><span style="display:inline-block;transform:scaleX(0.969);transform-origin:left;">NON-OPERATING EXPENSES</span></div>
<div class="c" style="left:330px;top:625.6px;width:19px;text-align:right;padding-right:2.4px;box-sizing:border-box;">1</div>
<div class="c" style="left:349px;top:625.6px;width:50px;text-align:center;padding-left:1px;box-sizing:border-box;"><span style="display:inline-block;transform:scaleX(0.885);transform-origin:center;">USD</span></div>
<div class="c" style="left:399px;top:625.6px;width:61px;text-align:right;padding-right:2.1px;box-sizing:border-box;"><span style="display:inline-block;transform:scaleX(1.015);transform-origin:right;">(108 446)</span></div>
<div class="c" style="left:460px;top:625.6px;width:55px;text-align:right;padding-right:2.1px;box-sizing:border-box;"><span style="display:inline-block;transform:scaleX(1.015);transform-origin:right;">(12 635)</span></div>
<div class="c" style="left:515px;top:625.6px;width:55px;text-align:right;padding-right:2.1px;box-sizing:border-box;"><span style="display:inline-block;transform:scaleX(1.015);transform-origin:right;">(12 888)</span></div>
<div class="c" style="left:570px;top:625.6px;width:55px;text-align:right;padding-right:2.1px;box-sizing:border-box;"><span style="display:inline-block;transform:scaleX(1.015);transform-origin:right;">(13 145)</span></div>
<div class="c" style="left:625px;top:625.6px;width:55px;text-align:right;padding-right:2.1px;box-sizing:border-box;"><span style="display:inline-block;transform:scaleX(1.015);transform-origin:right;">(13 408)</span></div>
<div class="c" style="left:680px;top:625.6px;width:55px;text-align:right;padding-right:2.1px;box-sizing:border-box;"><span style="display:inline-block;transform:scaleX(1.015);transform-origin:right;">(13 677)</span></div>
<div class="c" style="left:735px;top:625.6px;width:55px;text-align:right;padding-right:2.1px;box-sizing:border-box;"><span style="display:inline-block;transform:scaleX(1.015);transform-origin:right;">(13 950)</span></div>
<div class="c" style="left:790px;top:625.6px;width:55px;text-align:right;padding-right:2.1px;box-sizing:border-box;"><span style="display:inline-block;transform:scaleX(1.015);transform-origin:right;">(14 229)</span></div>
<div class="c" style="left:845px;top:625.6px;width:55px;text-align:right;padding-right:2.1px;box-sizing:border-box;"><span style="display:inline-block;transform:scaleX(1.015);transform-origin:right;">(14 514)</span></div>
<div class="c" style="left:978px;top:625.6px;width:60px;text-align:right;padding-right:2.3px;box-sizing:border-box;"><span style="display:inline-block;transform:scaleX(1.015);transform-origin:right;">(1 043)</span></div>
<div class="c" style="left:1038px;top:625.6px;width:60px;text-align:right;padding-right:2.3px;box-sizing:border-box;"><span style="display:inline-block;transform:scaleX(1.015);transform-origin:right;">(1 045)</span></div>
<div class="c" style="left:1098px;top:625.6px;width:60px;text-align:right;padding-right:2.3px;box-sizing:border-box;"><span style="display:inline-block;transform:scaleX(1.015);transform-origin:right;">(1 047)</span></div>
<div class="c" style="left:1158px;top:625.6px;width:60px;text-align:right;padding-right:2.3px;box-sizing:border-box;"><span style="display:inline-block;transform:scaleX(1.015);transform-origin:right;">(1 049)</span></div>
<div class="c" style="left:1218px;top:625.6px;width:61px;text-align:right;padding-right:2.3px;box-sizing:border-box;"><span style="display:inline-block;transform:scaleX(1.015);transform-origin:right;">(1 050)</span></div>
<div class="c" style="left:1279px;top:625.6px;width:60px;text-align:right;padding-right:2.3px;box-sizing:border-box;"><span style="display:inline-block;transform:scaleX(1.015);transform-origin:right;">(1 052)</span></div>
<div class="c" style="left:1339px;top:625.6px;width:60px;text-align:right;padding-right:2.3px;box-sizing:border-box;"><span style="display:inline-block;transform:scaleX(1.015);transform-origin:right;">(1 054)</span></div>
<div class="c" style="left:1399px;top:625.6px;width:60px;text-align:right;padding-right:2.3px;box-sizing:border-box;"><span style="display:inline-block;transform:scaleX(1.015);transform-origin:right;">(1 055)</span></div>
<div class="c" style="left:43px;top:639.6px;width:177px;text-align:left;padding-left:11px;box-sizing:border-box;"><span style="display:inline-block;transform:scaleX(1.043);transform-origin:left;">adjusted for inflation</span></div>
<div class="c" style="left:349px;top:639.6px;width:50px;text-align:center;padding-left:1px;box-sizing:border-box;"><span style="display:inline-block;transform:scaleX(0.885);transform-origin:center;">USD</span></div>
<div class="c" style="left:399px;top:639.6px;width:61px;text-align:right;padding-right:2.1px;box-sizing:border-box;"><span style="display:inline-block;transform:scaleX(1.015);transform-origin:right;">(117 851)</span></div>
<div class="c" style="left:460px;top:639.6px;width:55px;text-align:right;padding-right:2.1px;box-sizing:border-box;"><span style="display:inline-block;transform:scaleX(1.015);transform-origin:right;">(12 772)</span></div>
<div class="c" style="left:515px;top:639.6px;width:55px;text-align:right;padding-right:2.1px;box-sizing:border-box;"><span style="display:inline-block;transform:scaleX(1.015);transform-origin:right;">(13 288)</span></div>
<div class="c" style="left:570px;top:639.6px;width:55px;text-align:right;padding-right:2.1px;box-sizing:border-box;"><span style="display:inline-block;transform:scaleX(1.015);transform-origin:right;">(13 825)</span></div>
<div class="c" style="left:625px;top:639.6px;width:55px;text-align:right;padding-right:2.1px;box-sizing:border-box;"><span style="display:inline-block;transform:scaleX(1.015);transform-origin:right;">(14 383)</span></div>
<div class="c" style="left:680px;top:639.6px;width:55px;text-align:right;padding-right:2.1px;box-sizing:border-box;"><span style="display:inline-block;transform:scaleX(1.015);transform-origin:right;">(14 964)</span></div>
<div class="c" style="left:735px;top:639.6px;width:55px;text-align:right;padding-right:2.1px;box-sizing:border-box;"><span style="display:inline-block;transform:scaleX(1.015);transform-origin:right;">(15 569)</span></div>
<div class="c" style="left:790px;top:639.6px;width:55px;text-align:right;padding-right:2.1px;box-sizing:border-box;"><span style="display:inline-block;transform:scaleX(1.015);transform-origin:right;">(16 198)</span></div>
<div class="c" style="left:845px;top:639.6px;width:55px;text-align:right;padding-right:2.1px;box-sizing:border-box;"><span style="display:inline-block;transform:scaleX(1.015);transform-origin:right;">(16 852)</span></div>
<div class="c" style="left:978px;top:639.6px;width:60px;text-align:right;padding-right:2.3px;box-sizing:border-box;"><span style="display:inline-block;transform:scaleX(1.015);transform-origin:right;">(1 045)</span></div>
<div class="c" style="left:1038px;top:639.6px;width:60px;text-align:right;padding-right:2.3px;box-sizing:border-box;"><span style="display:inline-block;transform:scaleX(1.015);transform-origin:right;">(1 049)</span></div>
<div class="c" style="left:1098px;top:639.6px;width:60px;text-align:right;padding-right:2.3px;box-sizing:border-box;"><span style="display:inline-block;transform:scaleX(1.015);transform-origin:right;">(1 052)</span></div>
<div class="c" style="left:1158px;top:639.6px;width:60px;text-align:right;padding-right:2.3px;box-sizing:border-box;"><span style="display:inline-block;transform:scaleX(1.015);transform-origin:right;">(1 056)</span></div>
<div class="c" style="left:1218px;top:639.6px;width:61px;text-align:right;padding-right:2.3px;box-sizing:border-box;"><span style="display:inline-block;transform:scaleX(1.015);transform-origin:right;">(1 059)</span></div>
<div class="c" style="left:1279px;top:639.6px;width:60px;text-align:right;padding-right:2.3px;box-sizing:border-box;"><span style="display:inline-block;transform:scaleX(1.015);transform-origin:right;">(1 063)</span></div>
<div class="c" style="left:1339px;top:639.6px;width:60px;text-align:right;padding-right:2.3px;box-sizing:border-box;"><span style="display:inline-block;transform:scaleX(1.015);transform-origin:right;">(1 066)</span></div>
<div class="c" style="left:1399px;top:639.6px;width:60px;text-align:right;padding-right:2.3px;box-sizing:border-box;"><span style="display:inline-block;transform:scaleX(1.015);transform-origin:right;">(1 070)</span></div>
<div class="c" style="left:43px;top:667.6px;width:177px;text-align:left;padding-left:3px;box-sizing:border-box;font-weight:bold;"><span style="display:inline-block;transform:scaleX(0.974);transform-origin:left;">TOTAL recoverable expenses</span></div>
<div class="c" style="left:349px;top:667.6px;width:50px;text-align:center;padding-left:1px;box-sizing:border-box;"><span style="display:inline-block;transform:scaleX(0.885);transform-origin:center;">USD</span></div>
<div class="c" style="left:399px;top:667.6px;width:61px;text-align:right;padding-right:2.1px;box-sizing:border-box;font-weight:bold;"><span style="display:inline-block;transform:scaleX(1.015);transform-origin:right;">(20 490 347)</span></div>
<div class="c" style="left:460px;top:667.6px;width:55px;text-align:right;padding-right:2.1px;box-sizing:border-box;font-weight:bold;"><span style="display:inline-block;transform:scaleX(1.015);transform-origin:right;">(2 384 697)</span></div>
<div class="c" style="left:515px;top:667.6px;width:55px;text-align:right;padding-right:2.1px;box-sizing:border-box;font-weight:bold;"><span style="display:inline-block;transform:scaleX(1.015);transform-origin:right;">(2 430 229)</span></div>
<div class="c" style="left:570px;top:667.6px;width:55px;text-align:right;padding-right:2.1px;box-sizing:border-box;font-weight:bold;"><span style="display:inline-block;transform:scaleX(1.015);transform-origin:right;">(2 478 821)</span></div>
<div class="c" style="left:625px;top:667.6px;width:55px;text-align:right;padding-right:2.1px;box-sizing:border-box;font-weight:bold;"><span style="display:inline-block;transform:scaleX(1.015);transform-origin:right;">(2 530 973)</span></div>
<div class="c" style="left:680px;top:667.6px;width:55px;text-align:right;padding-right:2.1px;box-sizing:border-box;font-weight:bold;"><span style="display:inline-block;transform:scaleX(1.015);transform-origin:right;">(2 580 167)</span></div>
<div class="c" style="left:735px;top:667.6px;width:55px;text-align:right;padding-right:2.1px;box-sizing:border-box;font-weight:bold;"><span style="display:inline-block;transform:scaleX(1.015);transform-origin:right;">(2 640 044)</span></div>
<div class="c" style="left:790px;top:667.6px;width:55px;text-align:right;padding-right:2.1px;box-sizing:border-box;font-weight:bold;"><span style="display:inline-block;transform:scaleX(1.015);transform-origin:right;">(2 693 226)</span></div>
<div class="c" style="left:845px;top:667.6px;width:55px;text-align:right;padding-right:2.1px;box-sizing:border-box;font-weight:bold;"><span style="display:inline-block;transform:scaleX(1.015);transform-origin:right;">(2 752 191)</span></div>
<div class="c" style="left:978px;top:667.6px;width:60px;text-align:right;padding-right:2.3px;box-sizing:border-box;font-weight:bold;"><span style="display:inline-block;transform:scaleX(1.015);transform-origin:right;">(197 013)</span></div>
<div class="c" style="left:1038px;top:667.6px;width:60px;text-align:right;padding-right:2.3px;box-sizing:border-box;font-weight:bold;"><span style="display:inline-block;transform:scaleX(1.015);transform-origin:right;">(197 326)</span></div>
<div class="c" style="left:1098px;top:667.6px;width:60px;text-align:right;padding-right:2.3px;box-sizing:border-box;font-weight:bold;"><span style="display:inline-block;transform:scaleX(1.015);transform-origin:right;">(197 643)</span></div>
<div class="c" style="left:1158px;top:667.6px;width:60px;text-align:right;padding-right:2.3px;box-sizing:border-box;font-weight:bold;"><span style="display:inline-block;transform:scaleX(1.015);transform-origin:right;">(197 621)</span></div>
<div class="c" style="left:1218px;top:667.6px;width:61px;text-align:right;padding-right:2.3px;box-sizing:border-box;font-weight:bold;"><span style="display:inline-block;transform:scaleX(1.015);transform-origin:right;">(197 917)</span></div>
<div class="c" style="left:1279px;top:667.6px;width:60px;text-align:right;padding-right:2.3px;box-sizing:border-box;font-weight:bold;"><span style="display:inline-block;transform:scaleX(1.015);transform-origin:right;">(198 660)</span></div>
<div class="c" style="left:1339px;top:667.6px;width:60px;text-align:right;padding-right:2.3px;box-sizing:border-box;font-weight:bold;"><span style="display:inline-block;transform:scaleX(1.015);transform-origin:right;">(198 975)</span></div>
<div class="c" style="left:1399px;top:667.6px;width:60px;text-align:right;padding-right:2.3px;box-sizing:border-box;font-weight:bold;"><span style="display:inline-block;transform:scaleX(1.015);transform-origin:right;">(199 290)</span></div>
<div class="c" style="left:43px;top:681.6px;width:177px;text-align:left;padding-left:11px;box-sizing:border-box;"><span style="display:inline-block;transform:scaleX(1.043);transform-origin:left;">adjusted for inflation</span></div>
<div class="c" style="left:349px;top:681.6px;width:50px;text-align:center;padding-left:1px;box-sizing:border-box;"><span style="display:inline-block;transform:scaleX(0.885);transform-origin:center;">USD</span></div>
<div class="c" style="left:399px;top:681.6px;width:61px;text-align:right;padding-right:2.1px;box-sizing:border-box;"><span style="display:inline-block;transform:scaleX(1.015);transform-origin:right;">(22 269 137)</span></div>
<div class="c" style="left:460px;top:681.6px;width:55px;text-align:right;padding-right:2.1px;box-sizing:border-box;"><span style="display:inline-block;transform:scaleX(1.015);transform-origin:right;">(2 410 532)</span></div>
<div class="c" style="left:515px;top:681.6px;width:55px;text-align:right;padding-right:2.1px;box-sizing:border-box;"><span style="display:inline-block;transform:scaleX(1.015);transform-origin:right;">(2 505 681)</span></div>
<div class="c" style="left:570px;top:681.6px;width:55px;text-align:right;padding-right:2.1px;box-sizing:border-box;"><span style="display:inline-block;transform:scaleX(1.015);transform-origin:right;">(2 606 903)</span></div>
<div class="c" style="left:625px;top:681.6px;width:55px;text-align:right;padding-right:2.1px;box-sizing:border-box;"><span style="display:inline-block;transform:scaleX(1.015);transform-origin:right;">(2 714 995)</span></div>
<div class="c" style="left:680px;top:681.6px;width:55px;text-align:right;padding-right:2.1px;box-sizing:border-box;"><span style="display:inline-block;transform:scaleX(1.015);transform-origin:right;">(2 823 077)</span></div>
<div class="c" style="left:735px;top:681.6px;width:55px;text-align:right;padding-right:2.1px;box-sizing:border-box;"><span style="display:inline-block;transform:scaleX(1.015);transform-origin:right;">(2 946 408)</span></div>
<div class="c" style="left:790px;top:681.6px;width:55px;text-align:right;padding-right:2.1px;box-sizing:border-box;"><span style="display:inline-block;transform:scaleX(1.015);transform-origin:right;">(3 065 886)</span></div>
<div class="c" style="left:845px;top:681.6px;width:55px;text-align:right;padding-right:2.1px;box-sizing:border-box;"><span style="display:inline-block;transform:scaleX(1.015);transform-origin:right;">(3 195 655)</span></div>
<div class="c" style="left:978px;top:681.6px;width:60px;text-align:right;padding-right:2.3px;box-sizing:border-box;"><span style="display:inline-block;transform:scaleX(1.015);transform-origin:right;">(197 338)</span></div>
<div class="c" style="left:1038px;top:681.6px;width:60px;text-align:right;padding-right:2.3px;box-sizing:border-box;"><span style="display:inline-block;transform:scaleX(1.015);transform-origin:right;">(197 979)</span></div>
<div class="c" style="left:1098px;top:681.6px;width:60px;text-align:right;padding-right:2.3px;box-sizing:border-box;"><span style="display:inline-block;transform:scaleX(1.015);transform-origin:right;">(198 624)</span></div>
<div class="c" style="left:1158px;top:681.6px;width:60px;text-align:right;padding-right:2.3px;box-sizing:border-box;"><span style="display:inline-block;transform:scaleX(1.015);transform-origin:right;">(198 929)</span></div>
<div class="c" style="left:1218px;top:681.6px;width:61px;text-align:right;padding-right:2.3px;box-sizing:border-box;"><span style="display:inline-block;transform:scaleX(1.015);transform-origin:right;">(199 557)</span></div>
<div class="c" style="left:1279px;top:681.6px;width:60px;text-align:right;padding-right:2.3px;box-sizing:border-box;"><span style="display:inline-block;transform:scaleX(1.015);transform-origin:right;">(200 636)</span></div>
<div class="c" style="left:1339px;top:681.6px;width:60px;text-align:right;padding-right:2.3px;box-sizing:border-box;"><span style="display:inline-block;transform:scaleX(1.015);transform-origin:right;">(201 287)</span></div>
<div class="c" style="left:1399px;top:681.6px;width:60px;text-align:right;padding-right:2.3px;box-sizing:border-box;"><span style="display:inline-block;transform:scaleX(1.015);transform-origin:right;">(201 943)</span></div>
<div class="c" style="left:43px;top:709.6px;width:177px;text-align:left;padding-left:11px;box-sizing:border-box;font-weight:bold;"><span style="display:inline-block;transform:scaleX(0.964);transform-origin:left;">Reimursed by tenants</span></div>
<div class="c" style="left:220px;top:709.6px;width:55px;text-align:right;padding-right:2.8px;box-sizing:border-box;">95%</div>
<div class="c" style="left:349px;top:709.6px;width:50px;text-align:center;padding-left:1px;box-sizing:border-box;"><span style="display:inline-block;transform:scaleX(0.885);transform-origin:center;">USD</span></div>
<div class="c" style="left:399px;top:709.6px;width:61px;text-align:right;padding-right:5.2px;box-sizing:border-box;">21 155 680</div>
<div class="c" style="left:460px;top:709.6px;width:55px;text-align:right;padding-right:5.2px;box-sizing:border-box;">2 290 006</div>
<div class="c" style="left:515px;top:709.6px;width:55px;text-align:right;padding-right:5.2px;box-sizing:border-box;">2 380 396</div>
<div class="c" style="left:570px;top:709.6px;width:55px;text-align:right;padding-right:5.2px;box-sizing:border-box;">2 476 558</div>
<div class="c" style="left:625px;top:709.6px;width:55px;text-align:right;padding-right:5.2px;box-sizing:border-box;">2 579 245</div>
<div class="c" style="left:680px;top:709.6px;width:55px;text-align:right;padding-right:5.2px;box-sizing:border-box;">2 681 924</div>
<div class="c" style="left:735px;top:709.6px;width:55px;text-align:right;padding-right:5.2px;box-sizing:border-box;">2 799 087</div>
<div class="c" style="left:790px;top:709.6px;width:55px;text-align:right;padding-right:5.2px;box-sizing:border-box;">2 912 592</div>
<div class="c" style="left:845px;top:709.6px;width:55px;text-align:right;padding-right:5.2px;box-sizing:border-box;">3 035 872</div>
<div class="c" style="left:978px;top:709.6px;width:60px;text-align:right;padding-right:5.3px;box-sizing:border-box;font-weight:bold;">187 471</div>
<div class="c" style="left:1038px;top:709.6px;width:60px;text-align:right;padding-right:5.3px;box-sizing:border-box;font-weight:bold;">188 080</div>
<div class="c" style="left:1098px;top:709.6px;width:60px;text-align:right;padding-right:5.3px;box-sizing:border-box;font-weight:bold;">188 693</div>
<div class="c" style="left:1158px;top:709.6px;width:60px;text-align:right;padding-right:5.3px;box-sizing:border-box;font-weight:bold;">188 983</div>
<div class="c" style="left:1218px;top:709.6px;width:61px;text-align:right;padding-right:5.3px;box-sizing:border-box;font-weight:bold;">189 579</div>
<div class="c" style="left:1279px;top:709.6px;width:60px;text-align:right;padding-right:5.3px;box-sizing:border-box;font-weight:bold;">190 605</div>
<div class="c" style="left:1339px;top:709.6px;width:60px;text-align:right;padding-right:5.3px;box-sizing:border-box;font-weight:bold;">191 222</div>
<div class="c" style="left:1399px;top:709.6px;width:60px;text-align:right;padding-right:5.3px;box-sizing:border-box;font-weight:bold;">191 837</div>
<svg style="position:absolute;left:0;top:0" width="1440" height="772"><g stroke="#173a78" stroke-width="1.1" stroke-dasharray="2,2"><line x1="219" y1="372.5" x2="330" y2="372.5"/><line x1="219" y1="386.5" x2="330" y2="386.5"/><line x1="219" y1="400.5" x2="330" y2="400.5"/><line x1="219" y1="414.5" x2="330" y2="414.5"/><line x1="219" y1="428.5" x2="330" y2="428.5"/><line x1="219" y1="442.5" x2="330" y2="442.5"/><line x1="219" y1="456.5" x2="330" y2="456.5"/><line x1="219" y1="470.5" x2="330" y2="470.5"/><line x1="219.5" y1="372" x2="219.5" y2="471"/><line x1="274.5" y1="372" x2="274.5" y2="471"/><line x1="329.5" y1="372" x2="329.5" y2="471"/><line x1="219" y1="512.5" x2="330" y2="512.5"/><line x1="219" y1="526.5" x2="330" y2="526.5"/><line x1="219" y1="540.5" x2="330" y2="540.5"/><line x1="219.5" y1="512" x2="219.5" y2="541"/><line x1="274.5" y1="512" x2="274.5" y2="541"/><line x1="329.5" y1="512" x2="329.5" y2="541"/><line x1="219" y1="624.5" x2="330" y2="624.5"/><line x1="219" y1="638.5" x2="330" y2="638.5"/><line x1="219.5" y1="624" x2="219.5" y2="639"/><line x1="274.5" y1="624" x2="274.5" y2="639"/><line x1="329.5" y1="624" x2="329.5" y2="639"/></g></svg>
<svg style="position:absolute;left:0;top:0" width="1440" height="772"><g fill="#16ad5a" stroke="#0b8d3f" stroke-width="0.7" stroke-linejoin="round"><polygon points="922.0,282.9 923.2,280.9 926.0,283.0 928.3,279.3 931.4,276.9 932.9,278.7 928.6,283.8 927.2,286.8"/><polygon points="922.0,338.9 923.2,336.9 926.0,339.0 928.3,335.3 931.4,332.9 932.9,334.7 928.6,339.8 927.2,342.8"/><polygon points="922.0,366.9 923.2,364.9 926.0,367.0 928.3,363.3 931.4,360.9 932.9,362.7 928.6,367.8 927.2,370.8"/><polygon points="922.0,380.9 923.2,378.9 926.0,381.0 928.3,377.3 931.4,374.9 932.9,376.7 928.6,381.8 927.2,384.8"/><polygon points="922.0,394.9 923.2,392.9 926.0,395.0 928.3,391.3 931.4,388.9 932.9,390.7 928.6,395.8 927.2,398.8"/><polygon points="922.0,408.9 923.2,406.9 926.0,409.0 928.3,405.3 931.4,402.9 932.9,404.7 928.6,409.8 927.2,412.8"/><polygon points="922.0,422.9 923.2,420.9 926.0,423.0 928.3,419.3 931.4,416.9 932.9,418.7 928.6,423.8 927.2,426.8"/><polygon points="922.0,436.9 923.2,434.9 926.0,437.0 928.3,433.3 931.4,430.9 932.9,432.7 928.6,437.8 927.2,440.8"/><polygon points="922.0,450.9 923.2,448.9 926.0,451.0 928.3,447.3 931.4,444.9 932.9,446.7 928.6,451.8 927.2,454.8"/><polygon points="922.0,464.9 923.2,462.9 926.0,465.0 928.3,461.3 931.4,458.9 932.9,460.7 928.6,465.8 927.2,468.8"/><polygon points="922.0,478.9 923.2,476.9 926.0,479.0 928.3,475.3 931.4,472.9 932.9,474.7 928.6,479.8 927.2,482.8"/><polygon points="922.0,506.9 923.2,504.9 926.0,507.0 928.3,503.3 931.4,500.9 932.9,502.7 928.6,507.8 927.2,510.8"/><polygon points="922.0,520.9 923.2,518.9 926.0,521.0 928.3,517.3 931.4,514.9 932.9,516.7 928.6,521.8 927.2,524.8"/><polygon points="922.0,534.9 923.2,532.9 926.0,535.0 928.3,531.3 931.4,528.9 932.9,530.7 928.6,535.8 927.2,538.8"/><polygon points="922.0,548.9 923.2,546.9 926.0,549.0 928.3,545.3 931.4,542.9 932.9,544.7 928.6,549.8 927.2,552.8"/><polygon points="922.0,562.9 923.2,560.9 926.0,563.0 928.3,559.3 931.4,556.9 932.9,558.7 928.6,563.8 927.2,566.8"/><polygon points="922.0,590.9 923.2,588.9 926.0,591.0 928.3,587.3 931.4,584.9 932.9,586.7 928.6,591.8 927.2,594.8"/><polygon points="922.0,604.9 923.2,602.9 926.0,605.0 928.3,601.3 931.4,598.9 932.9,600.7 928.6,605.8 927.2,608.8"/><polygon points="922.0,632.9 923.2,630.9 926.0,633.0 928.3,629.3 931.4,626.9 932.9,628.7 928.6,633.8 927.2,636.8"/><polygon points="922.0,646.9 923.2,644.9 926.0,647.0 928.3,643.3 931.4,640.9 932.9,642.7 928.6,647.8 927.2,650.8"/><polygon points="922.0,674.9 923.2,672.9 926.0,675.0 928.3,671.3 931.4,668.9 932.9,670.7 928.6,675.8 927.2,678.8"/><polygon points="922.0,688.9 923.2,686.9 926.0,689.0 928.3,685.3 931.4,682.9 932.9,684.7 928.6,689.8 927.2,692.8"/><polygon points="922.0,716.9 923.2,714.9 926.0,717.0 928.3,713.3 931.4,710.9 932.9,712.7 928.6,717.8 927.2,720.8"/></g></svg>
<div style="position:absolute;left:0;top:0;width:1440px;height:19px;background:linear-gradient(#fbfbfb,#f4f4f4);"></div>
<div style="position:absolute;left:0;top:0;width:1440px;height:1px;background:#e0e0e0;"></div>
<div style="position:absolute;left:0;top:19px;width:1440px;height:1px;background:#bdbdbd;"></div>
<svg style="position:absolute;left:0;top:0" width="19" height="19"><polygon points="17,5 17,17 5,17" fill="#d9d9d9"/></svg>
<div class="h" style="left:20px;width:23px;">A</div>
<div class="h" style="left:44px;width:175px;">B</div>
<div class="h" style="left:220px;width:54px;">C</div>
<div class="h" style="left:275px;width:54px;">D</div>
<div class="h" style="left:330px;width:19px;">E</div>
<div class="h" style="left:350px;width:49px;">F</div>
<div class="h" style="left:400px;width:60px;">G</div>
<div class="h" style="left:461px;width:54px;">H</div>
<div class="h" style="left:516px;width:54px;">I</div>
<div class="h" style="left:571px;width:54px;">J</div>
<div class="h" style="left:626px;width:54px;">K</div>
<div class="h" style="left:681px;width:54px;">L</div>
<div class="h" style="left:736px;width:54px;">M</div>
<div class="h" style="left:791px;width:54px;">N</div>
<div class="h" style="left:846px;width:54px;">O</div>
<div class="h" style="left:901px;width:54px;">P</div>
<div class="h" style="left:956px;width:22px;">Q</div>
<div class="h" style="left:979px;width:59px;">R</div>
<div class="h" style="left:1039px;width:59px;">S</div>
<div class="h" style="left:1099px;width:59px;">T</div>
<div class="h" style="left:1159px;width:59px;">U</div>
<div class="h" style="left:1219px;width:59px;">V</div>
<div class="h" style="left:1279px;width:59px;">W</div>
<div class="h" style="left:1339px;width:59px;">X</div>
<div class="h" style="left:1399px;width:59px;">Y</div>
<div style="position:absolute;left:43px;top:1px;width:1px;height:18px;background:#e0e0e0;"></div>
<div style="position:absolute;left:219px;top:1px;width:1px;height:18px;background:#e0e0e0;"></div>
<div style="position:absolute;left:274px;top:1px;width:1px;height:18px;background:#e0e0e0;"></div>
<div style="position:absolute;left:329px;top:1px;width:1px;height:18px;background:#e0e0e0;"></div>
<div style="position:absolute;left:349px;top:1px;width:1px;height:18px;background:#e0e0e0;"></div>
<div style="position:absolute;left:460px;top:1px;width:1px;height:18px;background:#e0e0e0;"></div>
<div style="position:absolute;left:515px;top:1px;width:1px;height:18px;background:#e0e0e0;"></div>
<div style="position:absolute;left:570px;top:1px;width:1px;height:18px;background:#e0e0e0;"></div>
<div style="position:absolute;left:625px;top:1px;width:1px;height:18px;background:#e0e0e0;"></div>
<div style="position:absolute;left:680px;top:1px;width:1px;height:18px;background:#e0e0e0;"></div>
<div style="position:absolute;left:735px;top:1px;width:1px;height:18px;background:#e0e0e0;"></div>
<div style="position:absolute;left:790px;top:1px;width:1px;height:18px;background:#e0e0e0;"></div>
<div style="position:absolute;left:845px;top:1px;width:1px;height:18px;background:#e0e0e0;"></div>
<div style="position:absolute;left:900px;top:1px;width:1px;height:18px;background:#e0e0e0;"></div>
<div style="position:absolute;left:955px;top:1px;width:1px;height:18px;background:#e0e0e0;"></div>
<div style="position:absolute;left:978px;top:1px;width:1px;height:18px;background:#e0e0e0;"></div>
<div style="position:absolute;left:1038px;top:1px;width:1px;height:18px;background:#e0e0e0;"></div>
<div style="position:absolute;left:1098px;top:1px;width:1px;height:18px;background:#e0e0e0;"></div>
<div style="position:absolute;left:1158px;top:1px;width:1px;height:18px;background:#e0e0e0;"></div>
<div style="position:absolute;left:1218px;top:1px;width:1px;height:18px;background:#e0e0e0;"></div>
<div style="position:absolute;left:1278px;top:1px;width:1px;height:18px;background:#e0e0e0;"></div>
<div style="position:absolute;left:1338px;top:1px;width:1px;height:18px;background:#e0e0e0;"></div>
<div style="position:absolute;left:1398px;top:1px;width:1px;height:18px;background:#e0e0e0;"></div>
<div style="position:absolute;left:0;top:20px;width:19px;height:703px;background:#f7f7f7;"></div>
<div style="position:absolute;left:19px;top:0;width:1px;height:723px;background:#bdbdbd;"></div>
<div class="rn" style="top:20.5px;height:14px;line-height:15px;">1</div>
<div style="position:absolute;left:0;top:33px;width:19px;height:1px;background:#e3e3e3;"></div>
<div class="rn" style="top:34.5px;height:17px;line-height:18px;">2</div>
<div style="position:absolute;left:0;top:50px;width:19px;height:1px;background:#e3e3e3;"></div>
<div class="rn" style="top:51.5px;height:14px;line-height:15px;">3</div>
<div style="position:absolute;left:0;top:64px;width:19px;height:1px;background:#e3e3e3;"></div>
<div class="rn" style="top:65.5px;height:14px;line-height:15px;">4</div>
<div style="position:absolute;left:0;top:78px;width:19px;height:1px;background:#e3e3e3;"></div>
<div class="rn" style="top:79.5px;height:14px;line-height:15px;">5</div>
<div style="position:absolute;left:0;top:92px;width:19px;height:1px;background:#e3e3e3;"></div>
<div class="rn" style="top:93.5px;height:14px;line-height:15px;">6</div>
<div style="position:absolute;left:0;top:106px;width:19px;height:1px;background:#e3e3e3;"></div>
<div class="rn" style="top:107.5px;height:14px;line-height:15px;">7</div>
<div style="position:absolute;left:0;top:120px;width:19px;height:1px;background:#e3e3e3;"></div>
<div class="rn" style="top:121.5px;height:14px;line-height:15px;">8</div>
<div style="position:absolute;left:0;top:134px;width:19px;height:1px;background:#e3e3e3;"></div>
<div class="rn" style="top:135.5px;height:14px;line-height:15px;">9</div>
<div style="position:absolute;left:0;top:148px;width:19px;height:1px;background:#e3e3e3;"></div>
<div class="rn" style="top:149.5px;height:14px;line-height:15px;">10</div>
<div style="position:absolute;left:0;top:162px;width:19px;height:1px;background:#e3e3e3;"></div>
<div class="rn" style="top:163.5px;height:14px;line-height:15px;">11</div>
<div style="position:absolute;left:0;top:176px;width:19px;height:1px;background:#e3e3e3;"></div>
<div class="rn" style="top:177.5px;height:14px;line-height:15px;">12</div>
<div style="position:absolute;left:0;top:190px;width:19px;height:1px;background:#e3e3e3;"></div>
<div class="rn" style="top:191.5px;height:14px;line-height:15px;">13</div>
<div style="position:absolute;left:0;top:204px;width:19px;height:1px;background:#e3e3e3;"></div>
<div class="rn" style="top:205.5px;height:14px;line-height:15px;">14</div>
<div style="position:absolute;left:0;top:218px;width:19px;height:1px;background:#e3e3e3;"></div>
<div class="rn" style="top:219.5px;height:14px;line-height:15px;">15</div>
<div style="position:absolute;left:0;top:232px;width:19px;height:1px;background:#e3e3e3;"></div>
<div class="rn" style="top:233.5px;height:14px;line-height:15px;">16</div>
<div style="position:absolute;left:0;top:246px;width:19px;height:1px;background:#e3e3e3;"></div>
<div class="rn" style="top:247.5px;height:14px;line-height:15px;">17</div>
<div style="position:absolute;left:0;top:260px;width:19px;height:1px;background:#e3e3e3;"></div>
<div class="rn" style="top:261.5px;height:14px;line-height:15px;">18</div>
<div style="position:absolute;left:0;top:274px;width:19px;height:1px;background:#e3e3e3;"></div>
<div class="rn" style="top:275.5px;height:14px;line-height:15px;">19</div>
<div style="position:absolute;left:0;top:288px;width:19px;height:1px;background:#e3e3e3;"></div>
<div class="rn" style="top:289.5px;height:14px;line-height:15px;">20</div>
<div style="position:absolute;left:0;top:302px;width:19px;height:1px;background:#e3e3e3;"></div>
<div class="rn" style="top:303.5px;height:14px;line-height:15px;">21</div>
<div style="position:absolute;left:0;top:316px;width:19px;height:1px;background:#e3e3e3;"></div>
<div class="rn" style="top:317.5px;height:14px;line-height:15px;">22</div>
<div style="position:absolute;left:0;top:330px;width:19px;height:1px;background:#e3e3e3;"></div>
<div class="rn" style="top:331.5px;height:14px;line-height:15px;">23</div>
<div style="position:absolute;left:0;top:344px;width:19px;height:1px;background:#e3e3e3;"></div>
<div class="rn" style="top:345.5px;height:14px;line-height:15px;">24</div>
<div style="position:absolute;left:0;top:358px;width:19px;height:1px;background:#e3e3e3;"></div>
<div class="rn" style="top:359.5px;height:14px;line-height:15px;">25</div>
<div style="position:absolute;left:0;top:372px;width:19px;height:1px;background:#e3e3e3;"></div>
<div class="rn" style="top:373.5px;height:14px;line-height:15px;">26</div>
<div style="position:absolute;left:0;top:386px;width:19px;height:1px;background:#e3e3e3;"></div>
<div class="rn" style="top:387.5px;height:14px;line-height:15px;">27</div>
<div style="position:absolute;left:0;top:400px;width:19px;height:1px;background:#e3e3e3;"></div>
<div class="rn" style="top:401.5px;height:14px;line-height:15px;">28</div>
<div style="position:absolute;left:0;top:414px;width:19px;height:1px;background:#e3e3e3;"></div>
<div class="rn" style="top:415.5px;height:14px;line-height:15px;">29</div>
<div style="position:absolute;left:0;top:428px;width:19px;height:1px;background:#e3e3e3;"></div>
<div class="rn" style="top:429.5px;height:14px;line-height:15px;">30</div>
<div style="position:absolute;left:0;top:442px;width:19px;height:1px;background:#e3e3e3;"></div>
<div class="rn" style="top:443.5px;height:14px;line-height:15px;">31</div>
<div style="position:absolute;left:0;top:456px;width:19px;height:1px;background:#e3e3e3;"></div>
<div class="rn" style="top:457.5px;height:14px;line-height:15px;">32</div>
<div style="position:absolute;left:0;top:470px;width:19px;height:1px;background:#e3e3e3;"></div>
<div class="rn" style="top:471.5px;height:14px;line-height:15px;">33</div>
<div style="position:absolute;left:0;top:484px;width:19px;height:1px;background:#e3e3e3;"></div>
<div class="rn" style="top:485.5px;height:14px;line-height:15px;">34</div>
<div style="position:absolute;left:0;top:498px;width:19px;height:1px;background:#e3e3e3;"></div>
<div class="rn" style="top:499.5px;height:14px;line-height:15px;">35</div>
<div style="position:absolute;left:0;top:512px;width:19px;height:1px;background:#e3e3e3;"></div>
<div class="rn" style="top:513.5px;height:14px;line-height:15px;">36</div>
<div style="position:absolute;left:0;top:526px;width:19px;height:1px;background:#e3e3e3;"></div>
<div class="rn" style="top:527.5px;height:14px;line-height:15px;">37</div>
<div style="position:absolute;left:0;top:540px;width:19px;height:1px;background:#e3e3e3;"></div>
<div class="rn" style="top:541.5px;height:14px;line-height:15px;">38</div>
<div style="position:absolute;left:0;top:554px;width:19px;height:1px;background:#e3e3e3;"></div>
<div class="rn" style="top:555.5px;height:14px;line-height:15px;">39</div>
<div style="position:absolute;left:0;top:568px;width:19px;height:1px;background:#e3e3e3;"></div>
<div class="rn" style="top:569.5px;height:14px;line-height:15px;">40</div>
<div style="position:absolute;left:0;top:582px;width:19px;height:1px;background:#e3e3e3;"></div>
<div class="rn" style="top:583.5px;height:14px;line-height:15px;">41</div>
<div style="position:absolute;left:0;top:596px;width:19px;height:1px;background:#e3e3e3;"></div>
<div class="rn" style="top:597.5px;height:14px;line-height:15px;">42</div>
<div style="position:absolute;left:0;top:610px;width:19px;height:1px;background:#e3e3e3;"></div>
<div class="rn" style="top:611.5px;height:14px;line-height:15px;">43</div>
<div style="position:absolute;left:0;top:624px;width:19px;height:1px;background:#e3e3e3;"></div>
<div class="rn" style="top:625.5px;height:14px;line-height:15px;">44</div>
<div style="position:absolute;left:0;top:638px;width:19px;height:1px;background:#e3e3e3;"></div>
<div class="rn" style="top:639.5px;height:14px;line-height:15px;">45</div>
<div style="position:absolute;left:0;top:652px;width:19px;height:1px;background:#e3e3e3;"></div>
<div class="rn" style="top:653.5px;height:14px;line-height:15px;">46</div>
<div style="position:absolute;left:0;top:666px;width:19px;height:1px;background:#e3e3e3;"></div>
<div class="rn" style="top:667.5px;height:14px;line-height:15px;">47</div>
<div style="position:absolute;left:0;top:680px;width:19px;height:1px;background:#e3e3e3;"></div>
<div class="rn" style="top:681.5px;height:14px;line-height:15px;">48</div>
<div style="position:absolute;left:0;top:694px;width:19px;height:1px;background:#e3e3e3;"></div>
<div class="rn" style="top:695.5px;height:14px;line-height:15px;">49</div>
<div style="position:absolute;left:0;top:708px;width:19px;height:1px;background:#e3e3e3;"></div>
<div class="rn" style="top:709.5px;height:14px;line-height:15px;">50</div>
<div style="position:absolute;left:0;top:722px;width:19px;height:1px;background:#e3e3e3;"></div>
<div style="position:absolute;left:399px;top:0;width:1px;height:723px;background:#9a9a9a;"></div>
<div style="position:absolute;left:0;top:232px;width:1440px;height:1px;background:#9a9a9a;"></div>
<div style="position:absolute;left:0;top:723px;width:1440px;height:26px;background:linear-gradient(#e6e6e6 0px,#efefef 5px,#f2f2f2 100%);border-top:1px solid #c9c9c9;box-sizing:border-box;"></div>
<div class="tab" style="left:60px;width:85px;">Welcome</div>
<div class="tab" style="left:145px;width:84.5px;">Contents</div>
<div class="tab" style="left:229.5px;width:79.0px;">Settings</div>
<div class="tab" style="left:308.5px;width:79.0px;">Checks</div>
<div class="tab" style="left:387.5px;width:87.0px;">Summary</div>
<div class="tab" style="left:474.5px;width:79.20000000000005px;">Inputs</div>
<div class="tab" style="left:553.7px;width:79.89999999999998px;">Rent roll</div>
<div class="tab" style="left:633.6px;width:119.10000000000002px;">Existing leases</div>
<div class="tab" style="left:752.7px;width:97.89999999999998px;">New leases</div>
<div class="tab" style="left:850.6px;width:99.89999999999998px;">Total leases</div>
<div class="tab" style="left:1039px;width:98px;">Renovation</div>
<div class="tab" style="left:1137px;width:79.70000000000005px;">Debt</div>
<div class="tab" style="left:1216.7px;width:88.89999999999986px;">Cash flow</div>
<div style="position:absolute;left:60px;top:724px;width:1px;height:20.5px;background:#d2d2d2;"></div>
<div style="position:absolute;left:145px;top:724px;width:1px;height:20.5px;background:#d2d2d2;"></div>
<div style="position:absolute;left:229px;top:724px;width:1px;height:20.5px;background:#d2d2d2;"></div>
<div style="position:absolute;left:308px;top:724px;width:1px;height:20.5px;background:#d2d2d2;"></div>
<div style="position:absolute;left:387px;top:724px;width:1px;height:20.5px;background:#d2d2d2;"></div>
<div style="position:absolute;left:474px;top:724px;width:1px;height:20.5px;background:#d2d2d2;"></div>
<div style="position:absolute;left:553px;top:724px;width:1px;height:20.5px;background:#d2d2d2;"></div>
<div style="position:absolute;left:633px;top:724px;width:1px;height:20.5px;background:#d2d2d2;"></div>
<div style="position:absolute;left:752px;top:724px;width:1px;height:20.5px;background:#d2d2d2;"></div>
<div style="position:absolute;left:850px;top:724px;width:1px;height:20.5px;background:#d2d2d2;"></div>
<div style="position:absolute;left:1136px;top:724px;width:1px;height:20.5px;background:#d2d2d2;"></div>
<div style="position:absolute;left:1216px;top:724px;width:1px;height:20.5px;background:#d2d2d2;"></div>
<div style="position:absolute;left:1305px;top:724px;width:1px;height:20.5px;background:#d2d2d2;"></div>
<div style="position:absolute;left:1371px;top:724px;width:1px;height:20.5px;background:#d2d2d2;"></div>
<div style="position:absolute;left:1409px;top:724px;width:1px;height:20.5px;background:#d2d2d2;"></div>
<div class="tab" style="left:1323.5px;width:45px;text-align:left;-webkit-mask-image:linear-gradient(90deg,#000 35%,rgba(0,0,0,0.12) 100%);">Returns</div>
<div style="position:absolute;left:1386px;top:734.7px;width:10.3px;height:2.4px;background:#474747;"></div>
<div style="position:absolute;left:1389.95px;top:731px;width:2.4px;height:9.8px;background:#474747;"></div>
<div style="position:absolute;left:951px;top:722px;width:88px;height:23px;background:#fff;border-radius:0 0 3px 3px;box-shadow:0 1px 1.5px rgba(0,0,0,0.35);"></div>
<div class="tab" style="left:951px;width:88px;color:#138a4d;font-weight:bold;">Expenses</div>
<svg style="position:absolute;left:0;top:723px" width="60" height="26"><polygon points="22,8.8 22,19 15,13.9" fill="#bdbdbd"/><polygon points="37.8,8.8 37.8,19 45.2,13.9" fill="#4a4a4a"/></svg>
<div style="position:absolute;left:0;top:749px;width:1440px;height:23px;background:linear-gradient(#e2e2e2,#d6d6d6);border-top:1px solid #b9b9b9;box-sizing:border-box;"></div>
<div class="st" style="left:24.5px;font-size:11.8px;">Ready</div>
<div class="st" style="left:130.8px;font-size:12.8px;">Accessibility: Investigate</div>
<svg style="position:absolute;left:74px;top:749px" width="24" height="23"><g fill="#5d5d5d"><circle cx="8.5" cy="6.7" r="2.5"/><rect x="9" y="10" width="1.1" height="5.2"/><path d="M6,15 H14.2 V17.8 H7.5 Q6,17.8 6,16.3 Z"/><path d="M12.3,5.3 H19.2 Q20.8,5.3 20.8,7.7 H17.7 V15.5 Q17.7,17.8 14.8,17.8 L14.2,16.8 Q16.5,16.8 16.5,15.2 V6.4 H12.3 Z"/></g></svg>
<svg style="position:absolute;left:110px;top:751px" width="20" height="20"><g fill="none" stroke="#5d5d5d" stroke-width="0.95" stroke-linecap="round" stroke-linejoin="round"><circle cx="8.4" cy="4.4" r="2"/><path d="M5.4,8.9 Q1.6,7.6 2.5,5.6 Q3.6,4.6 5.2,6.3 Q8.4,7.8 11.6,6.3 Q13.3,4.6 14.5,5.9 Q15.1,7.6 11.4,8.6 L10.9,10.4"/><path d="M5.4,8.9 Q5.5,12 4.8,14.2 Q4.3,16.5 5.8,16.3 Q6.6,15.8 8.1,12.6 Q8.9,13.3 9.4,14.2"/><path d="M10.4,10.3 L16.8,16.7 M16.6,10.3 L10.4,16.4" stroke-width="0.85"/></g></svg>
<div style="position:absolute;left:1121px;top:750px;width:37px;height:22px;background:#a9a9a9;"></div>
<svg style="position:absolute;left:1132px;top:753px" width="16" height="16"><rect x="1" y="1" width="13" height="13" fill="#fff"/><g fill="#9a9a9a"><rect x="2.2" y="2.2" width="2.8" height="2.8"/><rect x="2.2" y="6.2" width="2.8" height="2.8"/><rect x="2.2" y="10.2" width="2.8" height="2.8"/><rect x="6.2" y="2.2" width="2.8" height="2.8"/><rect x="6.2" y="6.2" width="2.8" height="2.8"/><rect x="6.2" y="10.2" width="2.8" height="2.8"/><rect x="10.2" y="2.2" width="2.8" height="2.8"/><rect x="10.2" y="6.2" width="2.8" height="2.8"/><rect x="10.2" y="10.2" width="2.8" height="2.8"/></g></svg>
<svg style="position:absolute;left:0;top:749px" width="1440" height="23"><g transform="translate(0,-749)" fill="none" stroke="#636363"><rect x="1168.6" y="754.5" width="12.8" height="11.8" rx="1" stroke-width="1.1"/><rect x="1171.5" y="756.6" width="6.7" height="7.6" stroke-width="1"/><path d="M1173.1,758.4 H1176.9 M1173.1,760.4 H1176.9 M1173.1,762.4 H1176.9" stroke-width="0.85"/><rect x="1204.7" y="754.5" width="12.6" height="11.8" rx="1" stroke-width="1.1"/><path d="M1204.7,761.3 H1212.6 V754.5 M1208.5,754.5 V761.3" stroke-width="1"/></g></svg>
<div style="position:absolute;left:1237px;top:759px;width:8px;height:2px;background:#555;"></div>
<div style="position:absolute;left:1252px;top:758.5px;width:100px;height:4px;border-radius:2px;background:#a3a3a3;"></div>
<div style="position:absolute;left:1286.8px;top:752px;width:16px;height:16px;border-radius:50%;background:#fff;box-shadow:0 0 1px rgba(0,0,0,0.5),0 1px 1px rgba(0,0,0,0.25);"></div>
<div style="position:absolute;left:1359px;top:759.2px;width:8px;height:1.8px;background:#555;"></div>
<div style="position:absolute;left:1362.1px;top:756px;width:1.8px;height:8.2px;background:#555;"></div>
<div class="st" style="left:1387px;font-size:12.8px;">85%</div>
</body></html>
